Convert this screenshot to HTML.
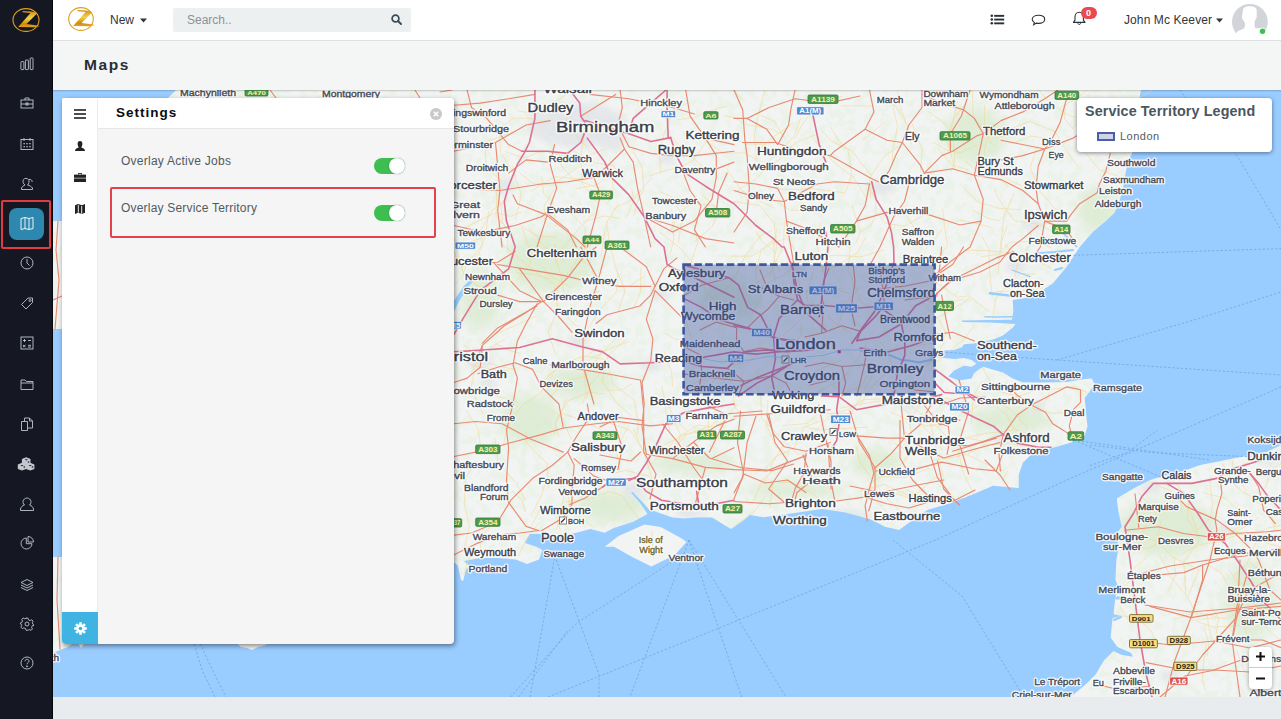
<!DOCTYPE html>
<html><head><meta charset="utf-8">
<style>
*{box-sizing:border-box}
html,body{margin:0;padding:0}
body{width:1281px;height:719px;overflow:hidden;position:relative;background:#e9ecef;font-family:"Liberation Sans",sans-serif}
.abs{position:absolute}
#sidebar{left:0;top:0;width:53px;height:719px;background:#151823;border-right:1px solid #06080f}
#header{left:53px;top:0;width:1228px;height:41px;background:#fff;border-bottom:1px solid #dfe1e1}
#titlebar{left:53px;top:41px;width:1228px;height:49px;background:#f4f5f5}
#map{left:53px;top:90px;width:1228px;height:607px;overflow:hidden;background:#f1f3ef}
#mapshade{left:53px;top:90px;width:1228px;height:2px;background:linear-gradient(rgba(0,0,0,.2),rgba(0,0,0,0))}
#footer{left:53px;top:697px;width:1228px;height:22px;background:#e8ecef}
#panel{left:62px;top:98px;width:392px;height:546px;background:#f5f5f5;border-radius:4px;box-shadow:1px 2px 5px rgba(0,0,0,.45);overflow:hidden}
#legend{left:1077px;top:98px;width:195px;height:54px;background:#fff;border-radius:4px;box-shadow:0 1px 4px rgba(0,0,0,.45)}
#zoom{left:1249px;top:647px;width:23px;height:42px;background:#fff;border-radius:4px;box-shadow:0 1px 4px rgba(0,0,0,.35)}
.t{position:absolute;white-space:nowrap;line-height:1}
svg{position:absolute;overflow:visible}
</style></head>
<body>
<div id="sidebar" class="abs"><svg style="left:11.1px;top:6.7px" width="30" height="26" viewBox="-15 -13 30 26"><defs><linearGradient id="gz2" x1="0" y1="0" x2="0" y2="1"><stop offset="0" stop-color="#d98a10"/><stop offset=".45" stop-color="#f0d448"/><stop offset=".8" stop-color="#d08a0c"/><stop offset="1" stop-color="#e3a21c"/></linearGradient></defs><ellipse cx="0" cy="0" rx="13" ry="11.4" fill="none" stroke="#dca21e" stroke-width="1.1"/><path d="M-3.6 -9 L5 -8.6 L9.5 -7.8 L11 -6.6 L0.5 4 L8 5 L14 6.1 L8 7.2 L-7.8 7.1 L4.5 -6.9 L-3.2 -7.8 Z" fill="url(#gz2)"/></svg><div class="abs" style="left:1px;top:200px;width:50px;height:49px;border:2px solid #e23b3f;border-radius:2px"></div><div class="abs" style="left:9px;top:208px;width:35px;height:32px;background:#2e87ae;border-radius:8px"></div><svg style="left:20px;top:217px" width="14" height="13" viewBox="0 0 14 13" fill="none" stroke="#fff" stroke-width=".9"><path d="M1 1.5l4-1 4 1 4-1v11l-4 1-4-1-4 1z"/><path d="M5 .5v11M9 1.5v11"/></svg><svg style="left:19.5px;top:56.5px" width="14" height="14" viewBox="0 0 14 14" fill="none" stroke="#c0c4cc" stroke-width=".9"><rect x="0.9" y="4.6" width="3" height="8" rx=".6"/><rect x="5.4" y="3" width="3" height="9.6" rx=".6"/><rect x="10.2" y="1" width="2.8" height="11.6" rx=".6"/></svg><svg style="left:19.5px;top:96.0px" width="14" height="14" viewBox="0 0 14 14" fill="none" stroke="#c0c4cc" stroke-width=".9"><rect x="1" y="4" width="12" height="8"/><path d="M5 4V2h4v2M1 8h12"/><rect x="6" y="7" width="2" height="2"/></svg><svg style="left:19.5px;top:136.5px" width="14" height="14" viewBox="0 0 14 14" fill="none" stroke="#c0c4cc" stroke-width=".9"><rect x="1" y="2.5" width="12" height="10"/><path d="M4 1v3M10 1v3"/><g fill="#c3c7cf" stroke="none"><rect x="3.5" y="6" width="1.3" height="1.3"/><rect x="6.4" y="6" width="1.3" height="1.3"/><rect x="9.3" y="6" width="1.3" height="1.3"/><rect x="3.5" y="9" width="1.3" height="1.3"/><rect x="6.4" y="9" width="1.3" height="1.3"/><rect x="9.3" y="9" width="1.3" height="1.3"/></g></svg><svg style="left:19.5px;top:176.5px" width="14" height="14" viewBox="0 0 14 14" fill="none" stroke="#c0c4cc" stroke-width=".9"><path d="M5 8c-2-1-2.5-4-1.5-5.5S7.5 1 8.5 2.5 9 7 7.5 8c2 .5 4 1.5 5 3v1.5H1.5V11c.8-1.5 2-2.5 3.5-3z"/><path d="M9 2.5c1.5-.5 3.2.5 3.2 2.5"/></svg><svg style="left:19.5px;top:256.0px" width="14" height="14" viewBox="0 0 14 14" fill="none" stroke="#c0c4cc" stroke-width=".9"><circle cx="7" cy="7" r="6"/><path d="M7 3v4l2.5 2.5"/></svg><svg style="left:19.5px;top:296.0px" width="14" height="14" viewBox="0 0 14 14" fill="none" stroke="#c0c4cc" stroke-width=".9"><path d="M1.5 8.5L8 2h4.5v4.5L6 13z"/><circle cx="10" cy="4.5" r="1"/></svg><svg style="left:19.5px;top:336.0px" width="14" height="14" viewBox="0 0 14 14" fill="none" stroke="#c0c4cc" stroke-width=".9"><rect x="1" y="1" width="12" height="12"/><path d="M3 4.5h3M4.5 3v3M8 4.5h3M3 9l2.5 2M5.5 9L3 11M8 9.3h3M8 11h3"/></svg><svg style="left:19.5px;top:376.5px" width="14" height="14" viewBox="0 0 14 14" fill="none" stroke="#c0c4cc" stroke-width=".9"><path d="M1 3h4l1.5 1.5H13v8H1z"/><path d="M1 6h12"/></svg><svg style="left:19.5px;top:416.5px" width="14" height="14" viewBox="0 0 14 14" fill="none" stroke="#c0c4cc" stroke-width=".9"><path d="M1.5 4.5h6v9h-6z"/><path d="M4.5 4.5V1h5l3 3v7h-5"/><path d="M9.5 1v3h3"/></svg><svg style="left:19.5px;top:496.5px" width="14" height="14" viewBox="0 0 14 14" fill="none" stroke="#c0c4cc" stroke-width=".9"><path d="M4.5 8c-1.5-1-2-3.5-1-5S6 1 7 1s2.5.5 3.5 2 .5 4-1 5c2 .5 3.5 2 4 4v1.5H.5V12c.5-2 2-3.5 4-4z"/></svg><svg style="left:19.5px;top:536.0px" width="14" height="14" viewBox="0 0 14 14" fill="none" stroke="#c0c4cc" stroke-width=".9"><path d="M6.3 2a5.5 5.5 0 1 0 5.7 5.7H6.3z"/><path d="M8 .5v5.5h5.5A5.5 5.5 0 0 0 8 .5z"/></svg><svg style="left:19.5px;top:577.5px" width="14" height="14" viewBox="0 0 14 14" fill="none" stroke="#c0c4cc" stroke-width=".9"><path d="M7 1.5l6 3-6 3-6-3z"/><path d="M1 7l6 3 6-3M1 9.5l6 3 6-3"/></svg><svg style="left:19.5px;top:616.5px" width="14" height="14" viewBox="0 0 14 14" fill="none" stroke="#c0c4cc" stroke-width=".9"><circle cx="7" cy="7" r="2"/><path d="M6 1h2l.5 1.7 1.6.7 1.6-.8 1.4 1.4-.8 1.6.7 1.6L14 8v.1l-1.7.5-.7 1.6.8 1.6-1.4 1.4-1.6-.8-1.6.7L7.3 13H6l-.5-1.7-1.6-.7-1.6.8-1.4-1.4.8-1.6-.7-1.6L.1 6.1v-.2l1.7-.5.7-1.6-.8-1.6 1.4-1.4 1.6.8 1.6-.7z" transform="translate(0,.2)"/></svg><svg style="left:19.5px;top:655.5px" width="14" height="14" viewBox="0 0 14 14" fill="none" stroke="#c0c4cc" stroke-width=".9"><circle cx="7" cy="7" r="6"/><path d="M5 5.3c0-1.3 1-2 2-2s2 .7 2 1.8c0 1.5-2 1.5-2 3.2"/><circle cx="7" cy="10.3" r=".5" fill="#c3c7cf"/></svg><svg style="left:17px;top:457px" width="18" height="13" viewBox="0 0 18 13"><g fill="#c4c7ce"><path d="M9.2 .3l4.3 1.6v4.6L9.2 8 4.9 6.5V1.9z"/><path d="M5 5.8l4.2 1.6v4.6L5 13.4.8 12V7.4z"/><path d="M13.2 5.8l4.2 1.6v4.6l-4.2 1.4L9 12V7.4z"/></g><g fill="#151823"><path d="M7.6 2.2h3.4L9.3 3.6z"/><path d="M3.4 7.9h3.2L5 9.3z"/><path d="M11.6 7.9h3.2L13.2 9.3z"/><circle cx="11.5" cy="5" r=".8"/><circle cx="7.3" cy="10" r=".8"/><circle cx="15.5" cy="10" r=".8"/></g></svg></div>
<div id="header" class="abs">
<svg style="left:12.5px;top:6.25px" width="30" height="26" viewBox="-15 -13 30 26"><defs><linearGradient id="gz1" x1="0" y1="0" x2="0" y2="1"><stop offset="0" stop-color="#d98a10"/><stop offset=".45" stop-color="#f0d448"/><stop offset=".8" stop-color="#d08a0c"/><stop offset="1" stop-color="#e3a21c"/></linearGradient></defs><ellipse cx="0" cy="0" rx="12.3" ry="11.4" fill="none" stroke="#dca21e" stroke-width="1.1"/><path d="M-3.6 -9 L5 -8.6 L9.5 -7.8 L11 -6.6 L0.5 4 L8 5 L14 6.1 L8 7.2 L-7.8 7.1 L4.5 -6.9 L-3.2 -7.8 Z" fill="url(#gz1)"/></svg>
<div class="t" style="left:57px;top:13.7px;font-size:12px;color:#2f353b">New</div>
<svg style="left:87px;top:18px" width="8" height="5"><path d="M0 0.5h7l-3.5 4z" fill="#2f353b"/></svg>
<div class="abs" style="left:120px;top:8px;width:238px;height:24px;background:#edf0f1;border-radius:2px"></div>
<div class="t" style="left:134px;top:14.3px;font-size:12px;color:#8c9196">Search..</div>
<svg style="left:338px;top:14px" width="11" height="11" viewBox="0 0 11 11"><circle cx="4.5" cy="4.5" r="3.4" fill="none" stroke="#3d4a55" stroke-width="1.7"/><path d="M7 7l3 3" stroke="#3d4a55" stroke-width="2" stroke-linecap="round"/></svg>
<svg style="left:937px;top:14px" width="16" height="13" viewBox="0 0 16 13"><g fill="#2b3038"><circle cx="1.8" cy="1.8" r="1.3"/><circle cx="1.8" cy="5.5" r="1.3"/><circle cx="1.8" cy="9.3" r="1.3"/><rect x="4.2" y="0.9" width="10" height="1.9"/><rect x="4.2" y="4.6" width="10" height="1.9"/><rect x="4.2" y="8.4" width="10" height="1.9"/></g></svg>
<svg style="left:978px;top:14px" width="16" height="13" viewBox="0 0 16 13"><path d="M7.5 1.2c3.6 0 6.2 1.7 6.2 4.1s-2.6 4.1-6.2 4.1c-.8 0-1.5-.1-2.2-.3L2.7 10.8l.6-2.2C1.9 7.8 1.2 6.6 1.2 5.3 1.2 2.9 3.9 1.2 7.5 1.2z" fill="none" stroke="#2b3038" stroke-width="1.1"/></svg>
<svg style="left:1019px;top:11px" width="15" height="15" viewBox="0 0 15 15"><path d="M7.2 1.3c-2.6 0-4.2 2-4.2 4.6v3.2L1.4 11.4h11.6l-1.6-2.3V5.9c0-2.6-1.6-4.6-4.2-4.6z" fill="none" stroke="#2b3038" stroke-width="1.1" stroke-linejoin="round"/><path d="M5.8 12.3a1.5 1.5 0 0 0 2.9 0" fill="none" stroke="#2b3038" stroke-width="1"/></svg>
<div class="abs" style="left:1028px;top:7px;width:16px;height:12px;border-radius:6px;background:#ea4a4f"></div>
<div class="t" style="left:1033px;top:9px;font-size:9px;font-weight:700;color:#fff">0</div>
<div class="t" style="left:1071px;top:13.8px;font-size:12px;color:#2f353b;letter-spacing:.1px">John Mc Keever</div>
<svg style="left:1163px;top:18px" width="8" height="5"><path d="M0 0.5h7l-3.5 4z" fill="#2f353b"/></svg>
<svg style="left:1178px;top:3px" width="38" height="37" viewBox="0 0 38 37"><circle cx="18.9" cy="18.9" r="17.9" fill="#d1d4d8"/><path d="M11.9 7.6C12 4.5 15 3.3 18.8 3.3S25.7 4.5 25.7 7.6L25.7 14.4C24 17 23.3 19 23.5 21.3C23.6 23.5 24.6 25.5 24.6 25.5L33 24.5L38 37L0 37L6.6 28.2L13 25.5C14 23 14.2 21.5 14 20.8C13.5 18 11 16 10.9 14.4Z" fill="#fff"/><circle cx="31.5" cy="28.2" r="2.7" fill="#3cc04f"/></svg>
</div>
<div id="titlebar" class="abs"><div class="t" style="left:31px;top:57px;font-size:15.5px;font-weight:700;color:#272d36;letter-spacing:1.6px;margin-top:-41px">Maps</div></div>
<div id="map" class="abs"><svg style="left:0;top:0" width="1228" height="607" viewBox="53 90 1228 607"><defs><filter id="gn" x="0" y="0" width="100%" height="100%" color-interpolation-filters="sRGB"><feTurbulence type="fractalNoise" baseFrequency="0.11" numOctaves="3" seed="5"/><feColorMatrix type="matrix" values="0 0 0 0 0.86  0 0 0 0 0.93  0 0 0 0 0.82  0 0 0 -6 3.3"/></filter><filter id="ub"><feGaussianBlur stdDeviation="3"/></filter><filter id="gb" x="-50%" y="-50%" width="200%" height="200%"><feGaussianBlur stdDeviation="6"/></filter></defs>
<rect x="53" y="90" width="1228" height="607" fill="#f2f4f3"/>
<rect x="53" y="90" width="1228" height="607" filter="url(#gn)" opacity=".28"/>
<g fill="#d9eacd" filter="url(#gb)" opacity=".75"><ellipse cx="975" cy="136" rx="30" ry="28"/><ellipse cx="1098" cy="210" rx="20" ry="22"/><ellipse cx="611" cy="506" rx="35" ry="16"/><ellipse cx="692" cy="463" rx="42" ry="10"/><ellipse cx="795" cy="490" rx="50" ry="8"/><ellipse cx="875" cy="463" rx="25" ry="14"/><ellipse cx="730" cy="300" rx="30" ry="20"/><ellipse cx="550" cy="262" rx="45" ry="30"/><ellipse cx="1166" cy="528" rx="48" ry="28"/><ellipse cx="645" cy="545" rx="22" ry="10"/><ellipse cx="1010" cy="420" rx="40" ry="14"/><ellipse cx="580" cy="382" rx="35" ry="16"/><ellipse cx="480" cy="300" rx="20" ry="30"/><ellipse cx="1250" cy="600" rx="25" ry="40"/><ellipse cx="530" cy="420" rx="30" ry="25"/></g>
<g fill="#e2e4e8" filter="url(#ub)" opacity=".8"><ellipse cx="577" cy="125" rx="50" ry="22"/><ellipse cx="612" cy="140" rx="14" ry="10"/><ellipse cx="505" cy="186" rx="10" ry="8"/><ellipse cx="667" cy="158" rx="9" ry="7"/><ellipse cx="882" cy="187" rx="12" ry="8"/><ellipse cx="1033" cy="225" rx="10" ry="7"/><ellipse cx="1016" cy="266" rx="10" ry="7"/><ellipse cx="480" cy="360" rx="14" ry="9"/><ellipse cx="488" cy="382" rx="8" ry="6"/><ellipse cx="578" cy="340" rx="10" ry="8"/><ellipse cx="651" cy="365" rx="10" ry="7"/><ellipse cx="660" cy="293" rx="9" ry="7"/><ellipse cx="796" cy="268" rx="10" ry="7"/><ellipse cx="842" cy="515" rx="30" ry="5"/><ellipse cx="690" cy="512" rx="14" ry="6"/><ellipse cx="633" cy="490" rx="10" ry="8"/><ellipse cx="540" cy="540" rx="12" ry="6"/><ellipse cx="1150" cy="488" rx="10" ry="6"/><ellipse cx="1270" cy="458" rx="14" ry="7"/><ellipse cx="1128" cy="540" rx="8" ry="7"/><ellipse cx="1225" cy="528" rx="8" ry="6"/><ellipse cx="1002" cy="440" rx="8" ry="6"/><ellipse cx="1036" cy="407" rx="8" ry="6"/><ellipse cx="910" cy="405" rx="10" ry="6"/><ellipse cx="1170" cy="676" rx="10" ry="6"/></g>
<polygon points="53.0,697.0 53.0,653.0 60.0,650.0 68.0,647.0 73.0,643.0 100.0,630.0 300.0,615.0 420.0,590.0 454.0,562.0 458.0,566.0 461.0,580.0 463.0,581.0 466.0,570.0 469.0,566.0 464.0,561.0 480.0,558.0 497.0,558.0 515.6,559.6 527.0,564.0 539.0,559.6 542.5,550.0 536.6,546.7 525.0,543.0 529.6,534.0 543.7,534.0 548.0,538.5 576.5,532.7 590.5,529.0 604.6,532.7 614.0,528.0 632.7,522.0 647.5,514.0 640.0,503.0 631.0,492.5 632.5,492.0 641.5,501.0 650.0,510.5 653.7,511.0 672.5,517.5 684.0,518.6 696.0,517.5 712.0,517.5 731.0,529.0 742.7,521.0 750.0,515.0 763.4,517.3 798.5,512.6 822.0,509.0 845.4,512.6 871.0,519.6 885.0,526.7 899.0,530.0 908.6,523.0 927.4,510.0 950.8,503.0 974.0,494.0 993.0,485.7 1018.7,488.0 1018.7,475.0 1022.9,462.7 1030.0,455.7 1038.4,451.5 1049.6,448.7 1059.4,445.9 1073.5,441.7 1084.7,436.0 1087.5,426.2 1086.0,412.2 1084.7,398.1 1089.0,392.5 1094.6,384.0 1091.7,378.4 1084.7,379.1 1066.5,382.0 1038.4,382.6 1022.4,382.3 1012.6,378.4 1003.0,372.6 993.2,369.7 983.4,366.7 979.5,368.7 973.7,373.6 971.7,378.4 959.0,380.4 948.4,376.5 954.2,370.6 964.0,365.8 971.7,366.7 976.6,363.8 971.7,360.0 964.0,358.0 954.2,359.0 934.7,357.0 932.0,361.0 918.7,363.5 910.0,361.7 901.5,361.0 888.6,355.7 870.0,353.0 860.0,351.5 860.0,350.0 870.0,351.5 888.6,353.7 901.5,358.9 910.0,359.7 918.7,361.5 930.0,359.0 932.0,354.0 934.7,351.0 944.5,350.5 954.2,350.0 962.0,347.3 964.0,344.3 973.7,343.4 979.5,342.4 993.2,339.5 1003.0,335.6 1012.6,327.8 1015.6,323.9 990.0,322.5 962.0,322.0 962.0,320.5 990.0,320.0 1012.0,319.7 1013.4,311.0 1012.7,300.0 1033.0,296.7 1053.0,283.3 1066.7,266.7 1079.7,247.0 1092.8,232.1 1106.0,221.1 1114.7,212.4 1120.0,199.3 1123.4,186.2 1125.6,173.0 1127.8,162.0 1132.0,153.4 1137.0,130.0 1139.8,96.6 1140.9,90.0 1281.0,90.0 1281.0,445.0 1267.0,451.7 1241.9,456.7 1216.9,461.7 1200.2,465.0 1183.5,470.9 1166.8,475.0 1150.0,480.0 1133.4,488.4 1116.7,498.4 1118.4,511.8 1121.7,526.8 1116.7,533.5 1118.4,548.5 1116.4,560.0 1115.4,579.3 1117.4,585.0 1114.5,604.5 1113.5,614.2 1121.2,616.0 1112.5,618.0 1110.6,637.4 1117.4,647.0 1131.0,652.8 1132.8,656.7 1121.2,654.8 1113.5,651.0 1103.8,660.6 1096.0,674.1 1086.4,683.8 1074.8,693.5 1069.0,697.3 1069.0,697.0" fill="#99ccff"/>
<polygon points="53.0,90.0 176.0,90.0 168.0,98.0 62.0,98.0 62.0,221.0 53.0,221.0" fill="#99ccff"/>
<polygon points="53.0,329.0 62.0,329.0 62.0,557.0 53.0,557.0" fill="#99ccff"/>
<polygon points="454.0,311.0 461.0,298.0 468.0,287.0 475.0,279.0 472.0,278.0 464.0,286.0 457.0,296.0 454.0,301.0" fill="#99ccff"/>
<polygon points="604.6,546.7 618.6,536.0 644.4,524.5 660.8,527.0 681.8,538.5 686.5,542.0 674.8,555.0 651.4,566.6 632.7,557.3 614.0,546.7" fill="#f2f4f3"/>
<polygon points="236.0,643.0 241.0,647.0 247.0,648.0 252.0,650.0 258.0,647.0 266.0,645.0 268.0,642.0" fill="#f2f4f3"/>
<polygon points="78.0,643.0 81.0,648.0 84.0,644.0" fill="#f2f4f3"/><g fill="none" stroke-linecap="round" stroke-linejoin="round">
<g stroke="#f0d992" stroke-width="0.7" opacity=".8">
<path d="M828.1 429.8 L849.7 416.4 L861.9 395.2 L871.7 376.6"/>
<path d="M608.0 361.1 L612.1 383.2 L634.1 400.0 L637.8 421.4 L637.7 434.3"/>
<path d="M466.4 410.7 L478.0 428.0 L480.2 443.7"/>
<path d="M942.7 208.6 L945.0 230.4 L947.5 245.2 L931.2 267.8"/>
<path d="M1148.9 519.6 L1144.5 529.2 L1138.4 539.5"/>
<path d="M543.2 266.6 L548.8 274.9 L571.8 287.8"/>
<path d="M782.7 134.3 L772.2 129.4 L745.3 124.5 L735.2 117.8 L723.6 115.6"/>
<path d="M600.9 429.5 L579.4 419.2 L563.4 413.9"/>
<path d="M951.9 440.2 L966.2 437.4 L981.7 441.2"/>
<path d="M699.1 134.6 L706.3 141.8 L724.1 153.3 L744.7 152.9 L755.6 159.0"/>
<path d="M773.3 470.7 L762.0 479.9 L753.1 501.4"/>
<path d="M1239.8 625.5 L1227.8 626.4 L1213.3 627.2 L1197.1 621.6"/>
<path d="M860.1 405.7 L869.4 389.6 L884.2 374.5"/>
<path d="M515.3 218.9 L519.2 204.6 L521.1 193.7 L515.5 178.0 L512.7 165.9"/>
<path d="M1264.9 488.8 L1271.9 469.4 L1287.7 459.7 L1298.8 448.8 L1299.8 428.0"/>
<path d="M515.9 130.8 L505.4 135.1 L483.3 142.3"/>
<path d="M1198.5 537.4 L1187.2 518.1 L1190.1 492.6"/>
<path d="M935.9 459.6 L950.4 458.0 L965.9 454.1 L986.1 463.9 L1003.1 470.7"/>
<path d="M901.6 404.8 L883.6 400.2 L861.3 404.2 L840.6 408.0"/>
<path d="M463.4 272.7 L453.7 251.2 L437.0 230.3"/>
<path d="M866.1 236.6 L857.7 252.2 L835.8 267.0 L818.9 266.7"/>
<path d="M936.2 282.1 L957.5 297.2 L968.6 295.9 L988.3 310.9"/>
<path d="M547.3 376.1 L562.7 364.3 L583.9 355.8 L604.9 359.4"/>
<path d="M684.0 458.8 L678.8 444.1 L680.2 433.8 L672.2 417.5"/>
<path d="M650.3 175.5 L661.7 171.7 L682.5 166.1 L692.6 160.9 L706.9 140.6"/>
<path d="M1030.7 405.9 L1010.0 393.2 L1005.8 382.5"/>
<path d="M1225.3 528.5 L1249.8 536.9 L1267.7 528.1 L1286.3 524.1"/>
<path d="M556.1 237.1 L536.5 235.6 L523.0 227.5"/>
<path d="M1206.6 609.5 L1208.5 625.5 L1212.2 640.0"/>
<path d="M483.0 413.6 L471.0 388.3 L474.7 369.4"/>
<path d="M817.4 429.2 L830.4 414.7 L849.6 409.0 L863.6 399.6 L889.8 398.6"/>
<path d="M927.9 212.0 L913.7 221.0 L904.3 226.2 L884.7 223.0 L877.6 213.1"/>
<path d="M531.1 191.2 L554.0 176.5 L568.7 178.0 L581.0 178.8"/>
<path d="M716.3 206.2 L692.6 202.7 L681.6 210.5 L670.5 229.9"/>
<path d="M720.4 305.7 L705.4 291.7 L700.0 271.2"/>
<path d="M963.3 416.7 L979.0 405.1 L1000.0 403.6 L1012.4 410.4 L1028.0 429.4"/>
<path d="M651.9 531.0 L653.1 557.9"/>
<path d="M619.9 471.2 L616.1 449.2 L629.0 425.0"/>
<path d="M549.4 396.9 L568.2 380.4 L586.4 376.0 L599.2 356.1 L617.2 336.9"/>
<path d="M852.0 205.1 L860.4 231.6 L856.0 242.5"/>
<path d="M724.3 373.4 L708.7 379.5 L698.1 381.1 L684.1 391.4"/>
<path d="M751.4 314.7 L761.3 298.3 L755.3 272.9 L761.0 250.9 L776.7 236.5"/>
<path d="M788.5 454.0 L775.8 446.8 L766.7 425.2 L767.9 400.5"/>
<path d="M1181.6 511.7 L1180.7 488.8 L1169.9 476.7"/>
<path d="M841.7 96.4 L831.2 99.3 L809.1 115.3 L801.0 126.5 L794.9 138.4"/>
<path d="M517.5 402.4 L494.9 395.3 L490.0 386.1"/>
<path d="M666.2 333.7 L674.9 339.1 L689.7 341.6"/>
<path d="M735.9 418.1 L710.4 429.5 L686.3 434.4 L673.1 450.3 L663.4 455.2"/>
<path d="M844.1 192.7 L826.6 190.4 L811.5 188.7 L795.9 189.4 L777.2 189.3"/>
<path d="M938.5 474.2 L919.3 492.0 L909.1 495.8 L884.5 484.5 L859.1 491.1"/>
<path d="M809.2 379.9 L816.6 370.7 L840.9 360.5"/>
<path d="M495.7 343.2 L506.8 349.5 L518.8 353.1"/>
<path d="M798.8 454.8 L781.2 438.5 L761.7 418.5 L760.6 395.3 L755.1 384.6"/>
<path d="M1192.3 566.1 L1173.1 557.4 L1157.2 541.5 L1142.8 537.2"/>
<path d="M869.3 486.3 L879.0 491.6 L896.6 493.9 L907.8 497.6 L918.2 502.0"/>
<path d="M525.5 500.5 L516.8 483.9 L506.2 471.8 L498.0 462.5 L494.8 438.3"/>
<path d="M1147.0 556.7 L1128.8 573.3"/>
<path d="M759.4 148.9 L772.8 137.2 L793.1 123.2"/>
<path d="M461.7 278.3 L466.8 263.7 L481.3 246.5 L485.7 234.7 L488.6 211.8"/>
<path d="M757.0 161.3 L754.3 135.2 L757.2 120.4 L763.9 93.4 L766.3 79.6"/>
<path d="M1254.3 533.0 L1237.9 535.0 L1221.7 540.6"/>
<path d="M774.5 208.3 L752.1 197.1 L741.0 190.0 L726.6 168.5"/>
<path d="M686.8 103.5 L672.9 110.1 L664.1 133.7 L659.4 153.6 L660.9 173.4"/>
<path d="M730.6 256.1 L752.1 256.1 L771.8 243.4 L785.4 238.7"/>
<path d="M1254.8 498.1 L1244.6 493.2 L1235.9 486.8 L1222.0 462.8"/>
<path d="M766.6 144.2 L747.2 144.1 L724.1 136.0 L706.9 132.3 L685.0 140.4"/>
<path d="M592.7 214.0 L575.2 233.3 L560.4 251.1 L555.7 263.0"/>
<path d="M1214.6 643.7 L1218.7 617.6 L1212.0 607.7"/>
<path d="M606.6 221.9 L609.2 240.9 L615.2 266.3 L625.1 290.8 L618.5 311.0"/>
<path d="M784.3 222.0 L783.5 246.3 L772.5 267.8 L778.6 293.7"/>
<path d="M1191.8 620.5 L1214.5 617.8 L1227.3 618.4 L1241.2 610.9"/>
<path d="M880.8 476.6 L891.8 476.4 L904.9 477.7 L929.6 468.0"/>
<path d="M577.2 167.9 L567.5 174.4 L552.4 185.1 L532.0 182.8 L520.0 173.0"/>
<path d="M903.4 409.1 L916.6 420.2 L936.4 439.9 L941.9 449.7"/>
<path d="M515.5 175.3 L500.5 152.4 L499.4 130.6 L487.0 119.3 L480.2 106.8"/>
<path d="M920.5 368.1 L939.9 359.8 L952.3 348.5 L964.3 338.9 L974.4 325.2"/>
<path d="M1005.4 245.7 L1017.9 254.9 L1035.7 259.8 L1051.6 268.3"/>
<path d="M968.2 169.8 L951.7 164.6 L938.0 149.1"/>
<path d="M528.5 227.5 L543.7 246.0 L563.8 260.5"/>
<path d="M623.9 179.8 L613.5 165.8 L596.5 163.1 L571.9 150.4"/>
<path d="M957.3 101.3 L953.8 118.8 L949.8 132.0 L949.5 147.2"/>
<path d="M538.9 523.1 L526.6 538.6 L518.6 555.9"/>
<path d="M972.6 210.1 L988.1 218.3 L999.5 220.9"/>
<path d="M1057.5 234.8 L1040.2 224.6 L1014.2 220.6 L999.7 200.6 L994.2 189.6"/>
<path d="M607.5 422.5 L630.3 430.2 L645.1 454.0"/>
<path d="M1154.8 640.2 L1151.1 630.6 L1137.4 618.3 L1120.6 615.6"/>
<path d="M883.9 250.0 L860.7 256.9 L836.6 255.2 L817.7 256.9"/>
<path d="M538.8 299.7 L553.6 290.7 L569.9 270.4 L585.1 249.0 L604.9 233.9"/>
<path d="M551.1 159.6 L567.8 153.6 L582.9 158.3 L604.0 149.1"/>
<path d="M1198.4 534.3 L1189.7 510.1 L1172.4 491.7 L1148.7 481.6"/>
<path d="M904.7 488.7 L925.8 498.2"/>
<path d="M905.7 432.3 L908.6 452.3 L902.9 462.6 L892.9 469.6 L869.6 483.6"/>
<path d="M454.5 238.1 L458.3 255.6 L464.0 274.3 L481.2 288.8"/>
<path d="M644.9 275.9 L629.1 286.4 L601.7 283.6 L588.0 282.8"/>
<path d="M844.7 194.3 L851.8 174.2 L847.8 148.6 L838.7 141.0 L831.0 127.4"/>
<path d="M1198.6 617.8 L1185.6 593.9 L1184.7 576.4"/>
<path d="M553.8 509.5 L560.4 530.5"/>
<path d="M941.8 229.0 L933.5 241.5 L925.1 249.5"/>
<path d="M890.9 412.2 L908.8 420.3 L928.2 426.3 L955.2 419.8 L965.0 410.9"/>
<path d="M1061.2 107.5 L1070.3 102.1 L1089.7 88.8"/>
<path d="M867.4 199.2 L859.0 185.9 L853.1 177.1 L833.3 162.1 L815.2 141.0"/>
<path d="M1069.6 412.7 L1051.8 413.3 L1032.5 408.6"/>
<path d="M1050.7 247.6 L1037.5 241.3 L1010.0 242.2 L996.8 254.6 L981.1 256.8"/>
<path d="M957.1 459.4 L960.8 445.2 L968.4 436.8 L988.3 433.1 L1012.4 430.4"/>
<path d="M650.8 178.8 L634.9 197.8 L613.7 209.1"/>
<path d="M1086.9 392.5 L1073.6 386.6 L1051.3 389.4"/>
<path d="M504.6 339.3 L481.0 352.9 L470.7 374.2"/>
<path d="M950.8 171.7 L954.6 161.6 L953.1 135.7 L943.0 121.9 L928.6 111.7"/>
<path d="M517.3 110.8 L532.4 113.2 L555.2 102.0 L564.8 95.6 L573.0 82.4"/>
<path d="M1236.7 650.4 L1244.2 670.7 L1258.3 678.6"/>
<path d="M836.6 328.5 L840.7 318.4 L844.4 304.5 L860.7 286.2"/>
<path d="M851.1 332.9 L835.0 323.2 L825.3 314.1 L810.6 301.0"/>
<path d="M800.7 118.6 L793.8 136.7 L780.8 150.8 L764.4 165.1"/>
<path d="M633.9 152.8 L642.0 167.1 L644.0 190.1 L638.5 198.8 L633.8 215.1"/>
<path d="M883.5 123.3 L873.1 131.8 L863.4 139.4"/>
<path d="M626.4 339.3 L609.3 354.2 L598.9 374.8 L590.4 384.1 L586.4 398.7"/>
<path d="M640.9 267.3 L640.4 292.6 L632.8 309.6"/>
<path d="M463.4 552.3 L469.4 526.5 L464.4 504.6 L465.5 477.5 L473.9 466.0"/>
<path d="M977.1 144.6 L960.3 153.0 L945.5 149.7 L933.6 142.4"/>
<path d="M1043.1 405.9 L1051.0 389.1"/>
<path d="M1206.3 643.8 L1203.6 664.2 L1202.3 680.0 L1205.5 689.9"/>
<path d="M921.8 249.0 L917.1 232.7 L903.6 210.3"/>
<path d="M479.7 519.3 L479.8 540.5 L482.4 557.8"/>
<path d="M566.3 397.8 L563.0 407.6 L556.0 420.7 L554.5 434.6"/>
<path d="M1086.9 138.0 L1101.9 132.4 L1123.2 117.6 L1137.4 99.6 L1156.0 87.2"/>
<path d="M1251.2 590.4 L1257.6 614.0 L1267.4 628.5 L1283.3 643.7 L1299.0 658.6"/>
<path d="M1212.7 537.7 L1237.8 531.0 L1259.1 517.4"/>
<path d="M877.7 502.3 L894.8 521.4"/>
<path d="M724.3 292.6 L735.5 275.8 L745.5 255.4 L760.6 235.6 L771.8 230.4"/>
<path d="M765.7 496.3 L754.7 511.1 L735.0 525.3"/>
<path d="M678.2 243.0 L682.7 215.5 L670.7 196.2 L660.7 191.9"/>
<path d="M727.0 106.1 L716.1 109.0 L692.1 117.9 L678.1 119.6"/>
<path d="M571.4 439.9 L562.0 417.4 L551.2 409.9"/>
<path d="M661.9 386.4 L664.8 400.9 L666.2 415.8 L670.1 431.1"/>
<path d="M521.0 212.1 L510.7 216.4 L495.5 212.8 L483.5 218.4 L458.6 231.0"/>
<path d="M854.5 341.6 L860.5 329.2 L875.3 309.1 L878.5 296.1"/>
<path d="M694.5 241.5 L712.3 226.8 L716.0 217.0 L713.9 205.0 L701.6 194.2"/>
<path d="M879.3 96.4 L896.0 106.3 L908.4 127.2 L911.2 144.2"/>
<path d="M1118.1 592.4 L1131.7 579.5 L1148.6 575.7"/>
<path d="M759.4 488.8 L769.4 473.7 L772.6 462.9 L783.0 445.1"/>
<path d="M672.8 219.7 L673.8 239.5 L670.7 252.3"/>
<path d="M541.5 176.8 L543.8 193.8 L552.6 201.5 L555.9 226.4"/>
<path d="M1083.8 102.6 L1084.6 114.6 L1073.0 128.0"/>
<path d="M601.1 255.9 L604.7 232.2 L606.7 222.2 L618.3 203.7"/>
<path d="M963.8 299.2 L945.0 302.5 L933.0 303.3 L913.0 293.1 L892.8 284.5"/>
<path d="M800.8 323.5 L801.5 334.2 L790.2 350.2 L782.5 363.2 L784.6 374.0"/>
<path d="M722.6 415.9 L710.6 426.0 L684.2 434.8 L661.4 446.5"/>
<path d="M860.1 232.1 L870.9 225.6 L875.7 214.8 L875.9 200.1 L870.9 190.6"/>
<path d="M737.2 404.2 L721.1 424.1 L718.3 438.9"/>
<path d="M986.3 134.6 L979.8 125.5 L973.3 116.6 L972.3 89.1"/>
<path d="M692.6 342.5 L686.5 322.3 L690.4 311.7"/>
<path d="M1055.8 209.6 L1039.7 190.9 L1030.2 167.5 L1037.2 146.8"/>
<path d="M626.5 217.2 L633.9 200.4 L631.7 188.5"/>
<path d="M1232.2 460.3 L1233.5 471.5 L1246.1 490.6"/>
<path d="M1173.9 557.3 L1175.7 574.8 L1168.8 590.7"/>
<path d="M831.8 397.4 L848.3 391.5 L859.6 387.3 L874.4 366.2"/>
<path d="M990.2 227.0 L970.0 221.9 L959.0 220.0"/>
<path d="M800.6 260.7 L783.4 275.3 L770.3 281.3 L759.9 287.9"/>
<path d="M801.9 297.3 L797.7 275.9 L794.1 262.6 L796.2 252.5 L785.4 235.0"/>
<path d="M1128.6 620.0 L1119.7 606.0"/>
<path d="M509.0 370.6 L489.8 369.2 L471.2 365.3 L456.9 352.4 L432.7 350.3"/>
<path d="M1203.4 492.7 L1215.1 495.7 L1225.2 497.8 L1244.4 516.7"/>
<path d="M744.4 415.3 L735.1 408.2 L732.7 388.2"/>
<path d="M510.0 234.4 L502.3 221.2 L501.1 206.8 L498.6 196.1 L487.3 181.9"/>
<path d="M915.6 368.8 L932.8 360.7 L943.5 343.6"/>
<path d="M597.6 465.1 L612.8 473.7 L625.1 470.3 L647.7 475.8 L658.4 482.8"/>
<path d="M893.2 107.3 L897.5 126.6 L892.7 150.1 L892.3 165.5"/>
<path d="M631.5 415.8 L617.3 403.5 L602.4 382.2 L604.5 362.1"/>
<path d="M780.2 271.7 L774.5 261.7 L773.7 244.8 L776.7 229.1"/>
<path d="M550.6 278.9 L531.3 274.2 L517.3 273.0"/>
<path d="M536.0 315.8 L518.6 324.1 L497.2 333.2 L480.2 344.9"/>
<path d="M540.8 507.4 L531.6 526.0"/>
<path d="M957.8 447.8 L962.6 471.0 L973.6 493.8"/>
<path d="M1016.3 141.9 L1030.9 136.1 L1054.9 139.4 L1065.2 143.3"/>
<path d="M1085.5 119.1 L1069.7 115.8 L1051.7 104.7 L1042.6 94.4 L1027.6 74.6"/>
<path d="M850.3 293.6 L839.2 290.6 L828.6 284.0"/>
<path d="M1196.1 531.7 L1210.3 517.9 L1212.6 506.0 L1209.3 479.0"/>
<path d="M628.6 341.8 L614.5 346.5 L591.2 358.4"/>
<path d="M1035.3 390.1 L1018.0 397.0 L993.7 404.5 L978.0 402.4"/>
<path d="M992.7 318.8 L995.8 298.7 L1006.5 286.2 L1020.3 273.7 L1036.2 274.2"/>
<path d="M1030.8 231.8 L1031.5 242.6 L1017.7 262.7 L1014.7 276.8"/>
<path d="M508.0 199.1 L492.6 209.9 L480.7 230.2 L482.4 245.6 L477.8 255.2"/>
<path d="M1031.6 434.8 L1014.4 429.4 L1006.4 415.0 L995.8 405.3"/>
<path d="M1166.2 537.7 L1148.8 548.5 L1122.2 546.3"/>
<path d="M1240.5 526.2 L1230.2 532.4 L1220.8 541.5 L1199.0 544.7 L1181.3 554.1"/>
<path d="M671.2 136.0 L679.2 145.9 L697.9 162.2 L706.6 170.9"/>
<path d="M1035.2 447.7 L1008.6 443.5 L984.5 445.0 L968.5 453.5"/>
<path d="M922.1 301.7 L940.2 321.7 L945.4 331.7 L943.6 343.3"/>
<path d="M1005.1 131.2 L1029.4 121.4 L1055.0 131.4 L1064.9 148.5 L1078.0 166.5"/>
<path d="M525.2 511.6 L522.2 500.2 L512.2 491.1"/>
<path d="M1027.5 107.9 L1040.9 85.4 L1042.9 71.6 L1040.1 59.2 L1036.2 33.8"/>
<path d="M582.0 349.6 L587.3 329.7 L598.4 311.8 L616.4 292.0 L617.9 272.7"/>
<path d="M1023.4 405.5 L1017.9 397.1 L994.7 389.8 L982.6 368.0"/>
<path d="M740.8 99.1 L731.4 85.3 L726.8 66.5 L716.8 47.2"/>
<path d="M620.1 218.3 L604.3 216.0 L583.3 221.8"/>
<path d="M669.2 407.3 L675.7 419.9 L687.0 431.1"/>
<path d="M568.2 496.5 L573.9 512.5 L593.4 527.0"/>
<path d="M691.4 450.1 L708.5 430.0 L708.4 419.4 L720.0 406.1"/>
<path d="M585.1 131.1 L580.5 157.4 L582.8 184.1 L596.7 202.2"/>
<path d="M566.2 501.7 L588.1 499.0 L609.9 491.5 L621.8 495.7 L638.2 518.1"/>
<path d="M555.8 285.0 L539.1 274.5 L520.5 259.8 L500.1 242.1"/>
<path d="M521.4 225.3 L530.0 250.7 L530.6 264.0 L516.8 280.5"/>
<path d="M540.7 383.6 L556.2 369.6 L574.2 366.2 L595.3 349.3 L605.7 350.3"/>
<path d="M496.9 188.8 L496.0 216.1 L507.8 229.3 L507.6 250.3 L514.2 258.4"/>
<path d="M736.8 191.0 L754.8 179.7 L768.1 166.9 L781.3 158.4"/>
<path d="M934.5 343.1 L907.6 346.8 L885.7 350.2 L859.7 349.0"/>
<path d="M713.3 426.9 L698.3 425.2 L679.0 436.6 L664.7 450.7 L645.9 469.5"/>
<path d="M879.2 320.0 L898.0 317.2 L916.6 325.2 L931.6 320.5"/>
<path d="M982.6 127.5 L998.0 136.8 L1022.2 134.0"/>
<path d="M806.5 427.0 L818.8 430.0 L840.8 428.6 L867.4 427.2"/>
<path d="M822.9 271.4 L817.6 247.6 L820.5 223.2"/>
<path d="M1207.4 656.0 L1208.7 643.2 L1204.4 628.6"/>
<path d="M776.5 244.3 L774.3 223.2 L759.4 205.6 L734.2 201.4"/>
<path d="M1234.2 477.9 L1223.9 474.9"/>
<path d="M965.3 161.4 L977.0 170.7 L998.4 174.3 L1022.5 186.4"/>
<path d="M1241.3 466.0 L1254.5 458.7 L1271.3 450.3"/>
<path d="M896.8 377.1 L887.1 352.2 L877.2 337.4"/>
<path d="M783.4 296.3 L809.8 290.4 L827.3 290.6 L841.4 288.5"/>
<path d="M554.9 352.8 L548.2 332.3 L558.0 308.0 L557.7 288.3 L571.5 274.5"/>
<path d="M501.1 181.2 L486.5 166.8 L485.2 152.0 L489.2 142.1"/>
<path d="M501.9 126.9 L513.6 118.2 L533.5 118.3 L546.4 105.2"/>
<path d="M525.9 432.3 L526.6 442.6 L538.3 455.0 L546.9 463.3 L548.9 488.5"/>
<path d="M856.5 446.8 L859.5 462.0 L874.8 482.4 L885.0 496.5 L903.5 514.8"/>
<path d="M756.5 355.2 L748.9 362.3 L728.0 365.7 L712.1 382.7"/>
<path d="M971.3 424.1 L973.2 396.6 L981.8 381.7"/>
<path d="M1239.5 488.1 L1226.8 479.4 L1218.4 471.4"/>
<path d="M919.8 327.6 L932.1 319.5 L945.0 314.1 L968.6 299.3"/>
<path d="M503.4 443.9 L509.0 424.0 L522.7 404.6 L539.9 393.7 L552.9 375.1"/>
<path d="M918.2 420.4 L937.6 426.9 L950.7 440.9"/>
<path d="M471.8 549.4 L463.7 574.8"/>
<path d="M1253.9 500.3 L1270.5 510.6 L1275.1 530.3"/>
<path d="M1081.6 135.7 L1085.1 151.9 L1099.2 169.7 L1118.5 176.4"/>
<path d="M783.0 335.6 L802.9 317.6 L808.5 305.7 L806.5 294.3 L813.2 272.0"/>
<path d="M672.7 386.9 L671.5 371.7 L664.2 351.7"/>
<path d="M753.6 285.2 L771.9 271.9 L776.7 245.8"/>
<path d="M871.9 308.0 L860.7 301.9 L855.5 286.7 L848.1 270.5 L850.7 244.1"/>
<path d="M1013.9 194.0 L1004.2 215.8 L1001.0 241.0 L999.9 252.0 L998.1 274.0"/>
<path d="M1157.0 542.5 L1160.6 522.3 L1155.7 512.7 L1137.6 491.7"/>
<path d="M505.8 151.8 L524.8 158.0 L536.5 152.9 L547.3 151.4 L560.6 155.8"/>
<path d="M471.0 241.5 L480.8 238.5 L496.0 229.9 L502.7 218.6"/>
<path d="M588.4 148.4 L570.5 129.5 L563.2 109.6"/>
<path d="M867.9 340.8 L859.2 356.5 L842.8 379.2 L820.3 390.4 L809.6 401.5"/>
<path d="M777.9 483.3 L791.3 482.0 L813.3 493.8 L829.2 509.7"/>
<path d="M782.7 425.6 L807.6 423.5 L818.0 413.5 L837.8 413.3 L853.4 413.4"/>
<path d="M576.6 326.4 L557.1 306.6 L554.1 286.2"/>
<path d="M906.1 123.9 L898.0 99.0 L897.6 85.1"/>
<path d="M823.6 419.9 L803.9 427.2 L794.1 448.0 L775.3 457.1 L765.2 469.0"/>
<path d="M606.2 204.3 L613.3 195.9 L612.3 171.5"/>
<path d="M570.2 212.5 L585.2 228.1 L584.9 252.6"/>
<path d="M1199.3 540.4 L1183.7 562.2 L1185.9 582.2"/>
<path d="M607.2 390.5 L622.1 389.7 L632.0 383.9"/>
<path d="M1007.8 471.1 L1002.5 479.8"/>
<path d="M554.9 243.8 L556.0 260.5 L560.1 272.4 L565.1 298.4"/>
<path d="M603.2 393.6 L588.9 392.2 L567.7 401.0 L555.4 423.5 L558.6 436.5"/>
<path d="M576.2 188.5 L597.5 184.7 L614.3 169.2"/>
<path d="M568.7 297.7 L582.8 298.8 L599.2 291.1"/>
<path d="M815.4 134.7 L797.2 142.2 L786.7 149.2"/>
<path d="M923.8 398.3 L909.1 421.9 L913.9 445.9 L905.4 461.4"/>
<path d="M693.6 263.6 L678.5 246.5 L660.4 232.9"/>
<path d="M689.3 267.7 L697.7 242.4 L694.6 225.7"/>
<path d="M1159.4 554.7 L1171.1 577.4 L1184.6 593.4"/>
<path d="M1246.9 635.0 L1239.7 611.0 L1238.7 583.7 L1228.8 569.5"/>
<path d="M920.5 169.9 L922.3 149.6 L912.2 124.3"/>
<path d="M776.0 252.6 L763.0 242.3 L755.6 231.1"/>
<path d="M914.4 296.0 L934.7 302.5 L950.6 311.8"/>
<path d="M873.3 106.4 L860.2 105.7 L841.6 105.9"/>
<path d="M1010.0 252.8 L986.7 250.7 L964.4 250.0"/>
<path d="M963.9 188.4 L978.1 202.2 L999.3 208.4 L1020.9 209.7"/>
<path d="M569.0 500.6 L566.1 525.8"/>
<path d="M984.6 105.5 L984.4 130.9 L992.7 144.9"/>
<path d="M531.1 515.3 L541.3 496.1 L546.2 479.2"/>
<path d="M982.0 236.2 L988.9 249.7 L989.6 271.0 L990.5 281.2 L992.3 295.8"/>
<path d="M951.5 399.2 L935.1 397.1 L923.4 398.2"/>
<path d="M1247.0 532.4 L1268.8 543.6 L1294.2 551.5 L1310.7 556.2 L1326.6 560.2"/>
<path d="M784.5 138.2 L774.1 120.9 L760.9 115.6"/>
<path d="M576.5 484.4 L564.8 491.8 L559.1 517.1 L556.7 529.3"/>
<path d="M1073.5 129.1 L1064.6 119.3 L1065.1 104.2"/>
<path d="M494.2 518.0 L489.4 527.5 L477.2 541.4"/>
<path d="M1198.8 569.9 L1193.8 582.2 L1188.1 596.6"/>
<path d="M584.1 367.9 L586.1 394.1 L582.0 404.0"/>
<path d="M870.9 174.9 L861.6 163.8 L852.6 151.0 L831.3 141.3 L820.6 129.3"/>
<path d="M551.8 148.1 L562.3 166.9 L573.4 179.3 L599.5 188.1"/>
<path d="M954.8 168.1 L947.5 141.4 L953.7 118.0 L965.4 104.5 L973.3 78.1"/>
<path d="M1207.5 564.6 L1221.5 573.0 L1232.7 594.6 L1237.6 619.3"/>
<path d="M773.3 480.1 L770.0 507.4"/>
<path d="M943.3 476.2 L937.7 455.6 L932.6 432.1 L930.0 420.8 L912.0 407.1"/>
<path d="M1233.4 575.9 L1247.2 563.4 L1254.6 544.5 L1268.4 531.6"/>
<path d="M463.8 344.5 L471.8 351.0 L488.8 362.9 L498.9 366.3 L515.0 369.4"/>
<path d="M1216.9 616.9 L1196.1 612.4 L1175.3 618.9"/>
<path d="M870.7 198.5 L869.7 178.1 L884.8 155.4 L903.0 143.7"/>
<path d="M1007.6 185.9 L989.3 171.2 L984.0 151.0 L989.9 128.0"/>
<path d="M1249.8 562.3 L1265.7 574.7 L1288.6 582.0"/>
<path d="M1118.5 90.7 L1110.4 79.5 L1093.9 65.5"/>
<path d="M604.4 289.3 L595.4 277.8 L591.0 266.7 L579.9 259.0"/>
<path d="M894.7 443.1 L909.0 452.0 L933.9 452.2"/>
<path d="M553.6 189.9 L544.1 205.8 L545.1 222.1"/>
<path d="M653.4 483.6 L648.2 466.1 L642.7 450.4 L633.7 429.9"/>
<path d="M1042.2 288.1 L1022.9 290.7 L996.2 291.6"/>
<path d="M1007.0 226.2 L1001.4 241.9 L1001.0 254.4"/>
<path d="M769.7 197.0 L789.7 209.9 L814.3 211.7"/>
</g><g stroke="#e88a72" stroke-width="1.15">
<polyline points="454,105.3 480.2,103.1 508.6,98.7 534.9,94.4"/>
<polyline points="467.1,90 471.5,107.5 486.8,118.4 508.6,144.6 521.8,151.2"/>
<polyline points="454,151.2 495.5,142.5 526.1,125 550.2,120.6"/>
<polyline points="495.5,142.5 497.7,166.5 499.9,190.5 497.7,210.2 502.1,247"/>
<polyline points="454,188.4 499.9,190.5 541.4,184 567.7,181.8 593.9,177.4 607,166.5"/>
<polyline points="513,194.9 517.4,203.7 545.8,214.6 576.4,238.6 585.1,247"/>
<polyline points="554.5,144.6 550.2,164.3 556.7,188.4 548,212.4 537.1,247"/>
<polyline points="545.8,212.4 556.7,221.1 567.7,229.9 576.4,247"/>
<polyline points="593.9,177.4 600.4,194.9 596.1,214.6 587.3,247"/>
<polyline points="454,225.5 482.4,232.1 515.2,225.5 541.4,216.8 548,212.4"/>
<polyline points="624.5,149 633.2,162.1 637.6,188.4 644.2,216.8 650.7,247"/>
<polyline points="628.9,146.8 650.7,153.4 672.6,155.6 694.4,155.6 734,151.2"/>
<polyline points="683.5,173.1 705.4,173.1 734,162.1"/>
<polyline points="705.4,138.1 716.3,155.6 716.3,177.4 711.9,199.3 694.4,221.1 672.6,232.1 644.2,216.8"/>
<polyline points="685.7,90 690.1,116.2 705.4,138.1 734,144.6"/>
<polyline points="620.1,90 622.3,107.5 617.9,125 628.9,146.8"/>
<polyline points="589.5,94.4 628.9,98.7 672.6,107.5 694.4,114"/>
<polyline points="580.8,116.2 598.3,105.3 615.7,94.4"/>
<polyline points="683.5,173.1 690.1,190.5 701,205.8 694.4,229.9 705.4,247"/>
<polyline points="727.2,173.1 718.5,192.7 716.3,212.4"/>
<polyline points="644.2,216.8 672.6,225.5 705.4,238.6 734,243"/>
<polyline points="607,166.5 624.5,149 620.1,138.1"/>
<polyline points="508.6,173.1 526.1,159.9 548,162.1"/>
<polyline points="734,90 742.7,109.7 744.9,140.3 747.1,155.6 749.3,188.4 747.1,212.4 734,232"/>
<polyline points="734,118.4 747.1,118.4 769,107.5 795.2,98.7 828,103.1 860,96"/>
<polyline points="747.1,118.4 766.8,129.3 777.7,144.6 788.6,125 790.8,109.7 795,90"/>
<polyline points="742.7,142.5 775.5,142.5 799.6,151.2 830.2,155.6 869.5,177.4 878.3,181.8"/>
<polyline points="734,181.8 755.9,184 777.7,188.4 784.3,201.5 786.5,221.1 790.8,247 794,265"/>
<polyline points="762.4,199.3 784.3,201.5 817.1,184 834.5,181.8 869.5,184"/>
<polyline points="830.2,155.6 834.5,151.2 865.1,129.3 873.9,111.9 869.5,90"/>
<polyline points="865.1,129.3 887,140.3 902.3,142.5 908.9,125 922,107.5 922,90"/>
<polyline points="902.3,142.5 895.7,155.6 889.2,170.9 882.6,179.6"/>
<polyline points="902.3,142.5 919.8,164.3 924.2,173.1"/>
<polyline points="924.2,173.1 952.6,168.7 974.4,175.2 1001,179.6 1022.9,190.5 1038.2,203.7"/>
<polyline points="924.2,173.1 941.7,155.6 952.6,151.2 976.6,135.9 983.2,133.7"/>
<polyline points="950.4,151.2 950.4,133.7 961.3,116.2 970.1,90"/>
<polyline points="983.2,133.7 974.4,118.4 963.5,109.7 941.7,103.1 922,94.4"/>
<polyline points="983.2,133.7 1001,120.6 1022.9,111.9 1044.7,98.7 1057.8,90"/>
<polyline points="974.4,175.2 981,144.6 983.2,133.7"/>
<polyline points="974.4,175.2 983.2,199.3 981,221.1 970.1,247 950,262 935,275"/>
<polyline points="908.9,184 904.5,201.5 893.6,216.8 880,247 870,265"/>
<polyline points="869.5,184 865.1,205.8 856.4,221.1 838.9,247"/>
<polyline points="856.4,221.1 887,212.4 928.5,214.6 960,225 981,221.1"/>
<polyline points="734,190.5 762.4,199.3"/>
<polyline points="786.5,221.1 810,230 838.9,247"/>
<polyline points="1066.6,98.7 1060,122.8 1051.3,140.3 1044.7,149 1038.2,166.5 1036,188.4 1038.2,203.7 1044.7,221.1 1040.3,247 1030,262"/>
<polyline points="1001,140.3 1044.7,149 1073.1,138.1 1090,128"/>
<polyline points="1044.7,149 1022.9,155.6 1001,160"/>
<polyline points="1110.3,153.4 1105.9,170.9 1099.4,184 1097.2,192.7 1079.7,203.7 1070.9,214.6 1066.6,221.1 1044.7,221.1"/>
<polyline points="1044.7,221.1 1066.6,229.9 1075.3,243"/>
<polyline points="1038.2,225.5 1022.9,238.6 1011.9,247 1000,262 980,272 950,281 935,295"/>
<polyline points="454,264.5 497.7,262.3 515.2,251.4"/>
<polyline points="519.6,268.9 543.6,301.6 558.9,317 572,332.2"/>
<polyline points="543.6,301.6 567.7,277.6 583,257.9 596.1,247"/>
<polyline points="497.7,264.5 524,268.9 563.3,275.4 580.8,279.8 617.9,286.3 650.7,286.3"/>
<polyline points="493.4,262.3 519.6,290.7 541.4,301.6 526.1,312.6 504.3,325.7 482.4,345.4 478,356.3"/>
<polyline points="497.7,295.1 519.6,301.6 543.6,301.6"/>
<polyline points="537.1,303.8 526.1,323.5 517.4,341 513,365 517.4,378.1 513,404 506.5,430.2 508.6,447.7 506.5,480.5 508.6,502.4 526.1,526.4 539.2,530.8"/>
<polyline points="580.8,247 598.3,279.8 589.5,308.2 583,338.8 583,365 593.9,404"/>
<polyline points="607,247 598.3,279.8"/>
<polyline points="596.1,323.5 607,314.8 639.8,306 650.7,295.1 663.8,268.9 677,257.9"/>
<polyline points="620.1,247 646.3,266.7 655.1,286.3"/>
<polyline points="655.1,290.7 646.3,319.1 652.9,338.8 650.7,360.7 642,382.5 644.2,404 642,425.9 646.3,454.3"/>
<polyline points="655.1,290.7 672.6,308.2 683.5,319.1"/>
<polyline points="482.4,345.4 480.2,367.2 467.1,378.1 454,382.5"/>
<polyline points="478,373.8 497.7,367.2 515.2,362.8 532.7,369.4 541.4,386.9 558.9,404 563.3,428"/>
<polyline points="550.2,365 580.8,369.4 607,373.8 640,380"/>
<polyline points="537.1,306 497.7,327.9 482.4,343.2"/>
<polyline points="454,423.7 475.9,421.5 502.1,423.7 530.5,439 563.3,452.1"/>
<polyline points="454,456.5 486.8,449.9 508.6,443.3 541.4,434.6 563.3,428 596.1,423.7 617.9,421.5 650.7,425.9 672.6,423.7"/>
<polyline points="567.7,452.1 574.2,465.2 572,491.4 572,504.5 563.3,517.7 541.4,530.8"/>
<polyline points="567.7,452.1 552.4,465.2 532.7,478.3 510.8,500.2 497.7,522 471.5,533 454,535.1"/>
<polyline points="567.7,452.1 576.4,436.8 589.5,417.1 587.3,404"/>
<polyline points="574.2,458.6 593.9,476.1 607,480.5"/>
<polyline points="602.6,487 585.1,498 569.8,504.5"/>
<polyline points="646.3,454.3 672.6,458.6 705.4,467.4 734,469.6 766.8,470.9 788.6,462.1 806.1,455.6"/>
<polyline points="705.4,467.4 698.8,491.4 694.4,506.7"/>
<polyline points="672.6,458.6 694.4,441.2 716.3,425.9 734,419.3"/>
<polyline points="712,458.6 734,447.7"/>
<polyline points="613.6,421.5 622.3,447.7 617.9,469.6"/>
<polyline points="454,554.8 475.9,543.9 497.7,535.1 519.6,533 537.1,530.8"/>
<polyline points="734,416.2 766.8,414 799.6,411.9 830.2,409.7"/>
<polyline points="766.8,414 773.3,433.7 784.3,446.8 806.1,451.2 830.2,442.5"/>
<polyline points="755.9,416.2 747.1,442.5 742.7,477.4 734,492.7"/>
<polyline points="806.1,453.4 804,473.1 795.2,488.4 790.8,503.7"/>
<polyline points="828,444.6 830.2,477.4 834.5,499.3"/>
<polyline points="734,501.5 769,503.7 799.6,501.5 832.4,501.5 865.1,497.1 887,503.7 908.9,508 930.7,501.5 952.6,501.5 975,490"/>
<polyline points="858.6,438.1 869.5,455.6 873.9,473.1 869.5,488.4 865.1,505.8 867.3,521.1"/>
<polyline points="856.4,435.9 887,438.1 904.5,438.1 919.8,425 930.7,405.3 941.6,394.4"/>
<polyline points="904.5,438.1 891.4,453.4 873.9,468.7"/>
<polyline points="900.1,394 902.3,416.2 904.5,438.1"/>
<polyline points="930.7,455.6 937.3,477.4 950.4,494.9"/>
<polyline points="996.3,438.1 974.4,444.6 952.6,451.2"/>
<polyline points="876.1,470.9 908.9,470.9 941.6,462.1 974.4,468.7 996.3,470.9 1002.8,453.4"/>
<polyline points="935,295.1 952.6,279.8 974.4,268.9 996.3,257.9 1014,251.4"/>
<polyline points="935,334.4 952.6,332.2 974.4,341"/>
<polyline points="941.6,295.1 946,319.1 950.4,338.8"/>
<polyline points="941.6,247 939.5,268.9 935,286.3"/>
<polyline points="963.5,247 952.6,264.5 939.5,273.2"/>
<polyline points="1003.2,434.6 1017.3,415 1031.3,405.1 1066.5,386.9 1080.5,389.7 1080.5,402.3 1073.5,409.3 1069.3,426.2 1073.5,441.7"/>
<polyline points="1031.3,405.1 1045.4,412.2 1052.4,423.4 1063.6,430.4 1073.5,437.4"/>
<polyline points="1031.3,405.1 1017.3,395.3 1010.3,388.3"/>
<polyline points="1003.2,434.6 982.2,441.7 968.1,445.9 948.4,444.5"/>
<polyline points="1003.2,434.6 999,454.3 1000.4,471"/>
<polyline points="940,423.4 948.4,426.2 949.8,440.3 947,454.3"/>
<polyline points="940,405 960,398 985,397"/>
<polyline points="1125,530.2 1158.4,526.8 1183.5,533.5 1208.5,536.8 1233.6,533.5 1266.9,531.8 1281,530.2"/>
<polyline points="1220.2,478.4 1221.9,493.4 1216.9,510.1 1215.2,520.1 1216.9,530.2 1210,560 1200,590 1190,620 1175,660 1165,697"/>
<polyline points="1180.1,500.1 1186.8,506.8 1216.9,520.1 1235.2,533.5 1250.3,548.5 1258.6,560 1270,590 1281,600"/>
<polyline points="1250.3,473.4 1258.6,486.7 1263.6,510.1 1275.3,523.5"/>
<polyline points="1135,575 1170,566 1209,560 1245,556 1281,548"/>
<polyline points="1145,605 1190,612 1240,608 1281,603"/>
<polyline points="1135,640 1170,645 1215,641 1250,648 1281,640"/>
<polyline points="1160,697 1185,676 1215,670 1250,672 1281,666"/>
<polyline points="1095,684 1120,690 1150,686"/>
<polyline points="1240,560 1238,600 1232,640 1240,697"/>
<polyline points="640.6,380 643.7,411 643.7,452 656,474 650,499"/>
<polyline points="693.7,399 725,414 762,411"/>
<polyline points="740.6,411 737.5,442.5 743.7,474 734,499"/>
<polyline points="693.7,442.5 709.4,458 740.6,467.5 771.8,470.6 793.7,464"/>
<polyline points="768.7,414 775,442.5 787.5,461 768.7,489 787.5,505"/>
<polyline points="803,455 812.5,480 797,492.5 793.7,505"/>
<polyline points="818.7,405 825,436 831,461 831,489"/>
<polyline points="850,411 859.4,442.5 875,467.5 875,489 868.7,511"/>
<polyline points="900,420.6 900,458 912.5,480 931,499"/>
<polyline points="912.5,442.5 943.7,458 975,449 1000,442.5"/>
<polyline points="937.5,461 943.7,489 959.4,505"/>
<polyline points="850,486 881,492.5 912.5,486 943.7,480"/>
<polyline points="959,380 968.7,411 959,442.5 968.7,474"/>
<polyline points="662.5,424 678,442.5 693.7,467.5 709.4,489"/>
<polyline points="725,420.6 709.4,452"/>
<polyline points="600,455 631,461 640.6,452"/>
<polyline points="600,427 619,417.5 643.7,420.6"/>
<polyline points="743.7,474 765.6,483 787.5,480 806,492.5"/>
<polyline points="985,460 1000,475 1010,490"/>
<polyline points="920,400 940,425 960,420"/>
<polyline points="683,296.3 701.5,285.2 729.2,277.8"/>
<polyline points="716.3,322.1 736.6,327.7 736.6,340.6 744,351.7 760,348 786.5,351.7"/>
<polyline points="683,346.2 701.5,355.4 701.5,373.9 697.8,396"/>
<polyline points="727.4,368.4 744,381.3 738.5,396"/>
<polyline points="747.7,327.7 758.8,316.6 768,309.2 779.1,296.3 793.9,300"/>
<polyline points="760,287 779.1,296.3"/>
<polyline points="683,373.9 710.7,377.6 744,381.3 771.7,375.8"/>
<polyline points="771.7,375.8 786,383 793,396"/>
<polyline points="805,337 821.6,333.2 842,325.8 860.5,331.4"/>
<polyline points="829,268.5 823.5,281.5 821.6,294.4 823.5,305.5 821.6,333.2"/>
<polyline points="853,263 855,281.5 851,309 855,325.8"/>
<polyline points="879,263 882.6,287 884.5,305.5"/>
<polyline points="905,300 937,296"/>
<polyline points="866,355.4 864,366.5 860.5,381.3 856.8,396"/>
<polyline points="805,366.5 823.5,362.8 842,366.5 866,364.7"/>
<polyline points="842,366.5 845.7,383 842,396"/>
<polyline points="700,330 716.3,322.1"/>
<polyline points="760,270 768,290"/>
<polyline points="900,380 915,390 935,392"/>
<polyline points="870,290 905,286 935,280"/>
<polyline points="810,385 830,380"/>
<polyline points="1142.5,576.3 1183.8,572.6 1202.6,565 1240,553.8 1281,550"/>
<polyline points="1150,606.4 1191.3,617.6 1236.3,610 1281,606.4"/>
<polyline points="1191.3,617.6 1202.6,580 1202.6,565"/>
<polyline points="1180,685 1202.6,655 1236.3,617.6 1247.6,591.4 1281,572.6"/>
<polyline points="1232.6,640 1262.6,640 1281,647.6"/>
<polyline points="1146.3,662.6 1183.8,670 1213.8,670 1255,655"/>
<polyline points="1135,493.8 1138.8,527.6"/>
<polyline points="1247.6,572.6 1240,598.9 1232.6,640"/>
<polyline points="270,90 276,98"/>
<polyline points="415,90 420,98"/>
<polyline points="440,92 452,90"/>
<polyline points="58,221 56,250 59,280 55,329"/>
<polyline points="53,300 62,296"/>
<polyline points="58,557 57,600 60,649"/>
</g><g stroke="#dd7193" stroke-width="1.6">
<polyline points="534.9,90 534.9,118.4 529.4,142.5 524,153.4 517.4,164.3 508.6,186.2 504.3,201.5 506.5,221.1 515.2,247 508.6,268.9 480.2,290.7 462.7,319.1 454,334.4"/>
<polyline points="569.8,90 579.7,103.1 580.8,116.2 585.1,122.8"/>
<polyline points="585.1,120.6 628.9,133.7 650.9,141.5 670.6,137.6 676.4,155.6 685.7,173.1 705.4,186.2 734,203.7 755.9,225.5 773.3,238.6 782.1,247 784.3,247 793,268.9 797.4,290.7 806.1,312.6 825.8,330.1"/>
<polyline points="667.1,90 667.1,109.7 668.2,138.1 670.6,137.6"/>
<polyline points="521.8,151.2 548,151.2 567.7,153.4 580.8,142.5 585.1,131.5"/>
<polyline points="587.3,138.1 604.8,162.1 611.4,177.4 628.9,194.9 644.2,216.8 655.1,238.6 664,247 667.1,264.5 674.8,268.9 685.7,273.2 734,297.3"/>
<polyline points="666,90 650.7,103.1 633.2,118.4 628.9,131.5"/>
<polyline points="812.7,114 819.2,144.6 825.8,162.1"/>
<polyline points="871.7,181.8 876.1,199.3 887,216.8 891.4,232.1 893.6,247 894,262 888,280 882.6,295.1"/>
<polyline points="825.8,232.1 828,247 825.8,268.9 821.4,301.6 819.2,317"/>
<polyline points="454,351.9 486.8,349.7 519.6,347.5 552.4,338.8 580.8,346.5 602.6,351.9 620.1,363.9 650.7,362.8 683.5,360.7 734,351.9 755.9,354.1 777.7,351.9 799.6,349.7"/>
<polyline points="734,325.7 755.9,330.1 777.7,338.8 799.6,341"/>
<polyline points="882.6,295.1 873.9,312.6 860.8,330.1 852,343.2"/>
<polyline points="935,369.4 952.6,382.5 974.4,400"/>
<polyline points="734,389 755.9,378.1 777.7,369.4 799.6,360.7"/>
<polyline points="734,404 705.4,408.4 683.5,412.7 666,423.7 655.1,447.7 646.3,463 637.6,476.1 628.9,480.5"/>
<polyline points="602.6,487 611.4,480.5 635.4,478.3 646.3,491.4 661.7,500.2 681.3,503.5 711.9,504.5 734,500.2"/>
<polyline points="696.6,491.4 698.8,504.5"/>
<polyline points="839,378 838.9,394.4 836.7,409.7 838.9,425 836.7,440.3 830.2,451.2"/>
<polyline points="821.4,396 838.9,396.6 856.4,409.7 891.4,403.1 926.3,398.7 941.6,394.4"/>
<polyline points="940,399.5 961.1,410.7 975.1,417.8 993.4,426.2 1003.2,434.6 1017.3,443.1 1038.4,447.3 1051,447.3"/>
<polyline points="934,382 944.2,392.5 954,393.2 969.5,393.9 982.2,400.9"/>
<polyline points="1281,453.4 1250.3,463.4 1233.6,468.4 1216.9,478.4 1191.8,483.4 1170.1,483.4 1153.4,483.4 1141.7,496.8 1133.4,513.5 1125,526.8 1130,560 1135,600 1140,640 1146,674 1152,697"/>
<polyline points="1166.8,483.4 1183.5,493.4 1196.8,511.8 1208.5,530.2 1225.2,543.5 1236.9,560 1250,580 1262,600 1281,620"/>
<polyline points="1246.9,470 1258.6,483.4 1266.9,495.1 1281,510.1"/>
<polyline points="683,298.1 701.5,307.4 720,320.3 747.7,327.7 771.7,336.9 786.5,340.6"/>
<polyline points="683,361 701.5,366.5 727.4,368.4 744,351.7 766.2,349.9 786.5,351.7 813,349.9"/>
<polyline points="792,263 793.9,281.5 797.6,300 779.1,318.5 773.6,336.9 775.4,359.1 771.7,377.6 775.4,396"/>
<polyline points="738.5,396 756.9,383.1 771.7,375.8 786.5,366.5"/>
<polyline points="683,264.8 729.2,277.8 738.5,285.2 747.7,307.4 760.6,314.8 769.9,333.2"/>
<polyline points="797.6,300 805,305.5 823.5,305.5 855,308.3 879,306.5 901.1,322.1 904.8,340.6 904.8,355.4 897.4,373.9 893.7,396"/>
<polyline points="884.5,305.5 875.2,316.6 860.5,331.4 856.8,340.6"/>
<polyline points="856.8,340.6 879,337 901.1,324 915.9,305.5 937,294.4"/>
<polyline points="860,348 888,352 910,346 937,337"/>
</g></g><g fill="none" stroke="#75a8e3" stroke-width=".9" stroke-dasharray="2.2 2">
<polyline points="548,697 860,571 935.6,540 1073.7,477 1281,387"/>
<polyline points="510.5,697 576,623.6 672.8,561.3"/>
<polyline points="530,697 554.8,556.4"/>
<polyline points="554.8,556 599,674.4 599,697"/>
<polyline points="689,540 630,697"/>
<polyline points="689,540 741.6,697"/>
<polyline points="689,540 786,697"/>
<polyline points="518.7,697 568,630"/>
<polyline points="180,600 194,643 202,670 215,697"/>
<polyline points="185,600 200,643 212.4,670 226,697"/>
<polyline points="893,540 962,596 1024,697"/>
<polyline points="1073.7,440 1210.6,460.2"/>
<polyline points="1073.7,440 1160.5,477"/>
<polyline points="942,352 1027,358 1281,375"/>
<polyline points="1057,360 1194,320 1281,292"/>
<polyline points="1073.7,255.3 1281,248.6"/>
<polyline points="1234,150.5 1263.4,200 1281,230"/>
<polyline points="1180,90 1215,140 1234,150.5"/>
<polyline points="1090,445 1150,452.5 1281,458"/>
<polyline points="1090,465.6 1127.5,452.5 1157.5,430"/>
</g>
<path d="M1076.7 246.7 L1068 238 L1060 230" fill="none" stroke="#99ccff" stroke-width="1.6" stroke-linecap="round"/>
<path d="M1073 250 L1055 252 L1035 253.3" fill="none" stroke="#99ccff" stroke-width="1.8" stroke-linecap="round"/>
<path d="M1062 268 L1055 270" fill="none" stroke="#99ccff" stroke-width="2.2" stroke-linecap="round"/>
<path d="M1030 276.7 L1020 273 L1012 270" fill="none" stroke="#99ccff" stroke-width="1.3" stroke-linecap="round"/>
<path d="M1020 296.7 L1005 295 L990 293.3" fill="none" stroke="#99ccff" stroke-width="2.6" stroke-linecap="round"/>
<path d="M1013 316.7 L995 317 L985 316.7" fill="none" stroke="#99ccff" stroke-width="1.4" stroke-linecap="round"/>
<path d="M1117 598 L1125 598" fill="none" stroke="#99ccff" stroke-width="3" stroke-linecap="round"/>
<path d="M1114 620 L1121 617" fill="none" stroke="#99ccff" stroke-width="2" stroke-linecap="round"/>
<path d="M860 350 L842 349.9 L823.5 355.4 L805 357 L785 358 L770 356 L750 360 L720 362 L700 358" fill="none" stroke="#99ccff" stroke-width="1" opacity=".8"/>
<rect x="837.7" y="350.2" width="3" height="3" fill="#b8368a"/>
<g font-family="Liberation Sans">
<rect x="808" y="95" width="30.0" height="8.4" rx="1.2" fill="#4e9a4f" stroke="#2f7a35" stroke-width=".8"/><text x="823.0" y="101.7" font-size="6.9" font-weight="700" fill="#f4f0b0" text-anchor="middle" textLength="24.0" lengthAdjust="spacingAndGlyphs">A1139</text>
<rect x="703.8" y="111.7" width="14.2" height="7.3" rx="1.2" fill="#4e9a4f" stroke="#2f7a35" stroke-width=".8"/><text x="710.9" y="117.5" font-size="6.0" font-weight="700" fill="#f4f0b0" text-anchor="middle" textLength="11.4" lengthAdjust="spacingAndGlyphs">A6</text>
<rect x="589.8" y="191" width="22.6" height="8.0" rx="1.2" fill="#4e9a4f" stroke="#2f7a35" stroke-width=".8"/><text x="601.1" y="197.4" font-size="6.6" font-weight="700" fill="#f4f0b0" text-anchor="middle" textLength="18.1" lengthAdjust="spacingAndGlyphs">A429</text>
<rect x="705.5" y="208.5" width="24.3" height="8.5" rx="1.2" fill="#4e9a4f" stroke="#2f7a35" stroke-width=".8"/><text x="717.6" y="215.3" font-size="7.0" font-weight="700" fill="#f4f0b0" text-anchor="middle" textLength="19.4" lengthAdjust="spacingAndGlyphs">A508</text>
<rect x="583" y="236" width="18.0" height="7.6" rx="1.2" fill="#4e9a4f" stroke="#2f7a35" stroke-width=".8"/><text x="592.0" y="242.1" font-size="6.2" font-weight="700" fill="#f4f0b0" text-anchor="middle" textLength="14.4" lengthAdjust="spacingAndGlyphs">A44</text>
<rect x="605" y="241" width="24.0" height="8.3" rx="1.2" fill="#4e9a4f" stroke="#2f7a35" stroke-width=".8"/><text x="617.0" y="247.6" font-size="6.8" font-weight="700" fill="#f4f0b0" text-anchor="middle" textLength="19.2" lengthAdjust="spacingAndGlyphs">A361</text>
<rect x="830.6" y="224.6" width="24.4" height="8.4" rx="1.2" fill="#4e9a4f" stroke="#2f7a35" stroke-width=".8"/><text x="842.8" y="231.3" font-size="6.9" font-weight="700" fill="#f4f0b0" text-anchor="middle" textLength="19.5" lengthAdjust="spacingAndGlyphs">A505</text>
<rect x="1055" y="91.2" width="23.7" height="8.2" rx="1.2" fill="#4e9a4f" stroke="#2f7a35" stroke-width=".8"/><text x="1066.8" y="97.8" font-size="6.7" font-weight="700" fill="#f4f0b0" text-anchor="middle" textLength="19.0" lengthAdjust="spacingAndGlyphs">A140</text>
<rect x="940" y="131.7" width="30.0" height="8.3" rx="1.2" fill="#4e9a4f" stroke="#2f7a35" stroke-width=".8"/><text x="955.0" y="138.3" font-size="6.8" font-weight="700" fill="#f4f0b0" text-anchor="middle" textLength="24.0" lengthAdjust="spacingAndGlyphs">A1065</text>
<rect x="1052.6" y="225" width="17.4" height="8.6" rx="1.2" fill="#4e9a4f" stroke="#2f7a35" stroke-width=".8"/><text x="1061.3" y="231.9" font-size="7.1" font-weight="700" fill="#f4f0b0" text-anchor="middle" textLength="13.9" lengthAdjust="spacingAndGlyphs">A14</text>
<rect x="935.8" y="301.4" width="17.7" height="9.0" rx="1.2" fill="#4e9a4f" stroke="#2f7a35" stroke-width=".8"/><text x="944.6" y="308.6" font-size="7.2" font-weight="700" fill="#f4f0b0" text-anchor="middle" textLength="14.2" lengthAdjust="spacingAndGlyphs">A12</text>
<rect x="593" y="431.8" width="24.0" height="7.7" rx="1.2" fill="#4e9a4f" stroke="#2f7a35" stroke-width=".8"/><text x="605.0" y="438.0" font-size="6.3" font-weight="700" fill="#f4f0b0" text-anchor="middle" textLength="19.2" lengthAdjust="spacingAndGlyphs">A343</text>
<rect x="697.8" y="431" width="18.2" height="8.0" rx="1.2" fill="#4e9a4f" stroke="#2f7a35" stroke-width=".8"/><text x="706.9" y="437.4" font-size="6.6" font-weight="700" fill="#f4f0b0" text-anchor="middle" textLength="14.6" lengthAdjust="spacingAndGlyphs">A31</text>
<rect x="720.5" y="431" width="24.0" height="8.0" rx="1.2" fill="#4e9a4f" stroke="#2f7a35" stroke-width=".8"/><text x="732.5" y="437.4" font-size="6.6" font-weight="700" fill="#f4f0b0" text-anchor="middle" textLength="19.2" lengthAdjust="spacingAndGlyphs">A287</text>
<rect x="475.7" y="445" width="24.3" height="8.6" rx="1.2" fill="#4e9a4f" stroke="#2f7a35" stroke-width=".8"/><text x="487.9" y="451.9" font-size="7.1" font-weight="700" fill="#f4f0b0" text-anchor="middle" textLength="19.4" lengthAdjust="spacingAndGlyphs">A303</text>
<rect x="723" y="504.6" width="19.0" height="8.4" rx="1.2" fill="#4e9a4f" stroke="#2f7a35" stroke-width=".8"/><text x="732.5" y="511.3" font-size="6.9" font-weight="700" fill="#f4f0b0" text-anchor="middle" textLength="15.2" lengthAdjust="spacingAndGlyphs">A27</text>
<rect x="475.7" y="518" width="24.3" height="8.3" rx="1.2" fill="#4e9a4f" stroke="#2f7a35" stroke-width=".8"/><text x="487.9" y="524.6" font-size="6.8" font-weight="700" fill="#f4f0b0" text-anchor="middle" textLength="19.4" lengthAdjust="spacingAndGlyphs">A354</text>
<rect x="1068" y="431.8" width="15.7" height="8.4" rx="1.2" fill="#4e9a4f" stroke="#2f7a35" stroke-width=".8"/><text x="1075.8" y="438.5" font-size="6.9" font-weight="700" fill="#f4f0b0" text-anchor="middle" textLength="12.6" lengthAdjust="spacingAndGlyphs">A2</text>
<rect x="245" y="89" width="23.0" height="7.0" rx="1.2" fill="#4e9a4f" stroke="#2f7a35" stroke-width=".8"/><text x="256.5" y="94.6" font-size="5.7" font-weight="700" fill="#f4f0b0" text-anchor="middle" textLength="18.4" lengthAdjust="spacingAndGlyphs">A470</text>
<rect x="448" y="518.7" width="13.7" height="8.3" rx="1.2" fill="#4e9a4f" stroke="#2f7a35" stroke-width=".8"/><text x="454.9" y="525.3" font-size="6.8" font-weight="700" fill="#f4f0b0" text-anchor="middle" textLength="11.0" lengthAdjust="spacingAndGlyphs">A37</text>
<rect x="661" y="110.7" width="14.7" height="7.0" rx="1.2" fill="#5189d0" stroke="#ffffff" stroke-width=".8"/><text x="668.4" y="116.3" font-size="5.7" font-weight="700" fill="#ffffff" text-anchor="middle" textLength="11.8" lengthAdjust="spacingAndGlyphs">M1</text>
<rect x="796.6" y="106.7" width="27.4" height="8.3" rx="1.2" fill="#5189d0" stroke="#ffffff" stroke-width=".8"/><text x="810.3" y="113.3" font-size="6.8" font-weight="700" fill="#ffffff" text-anchor="middle" textLength="21.9" lengthAdjust="spacingAndGlyphs">A1(M)</text>
<rect x="455" y="242" width="20.7" height="7.3" rx="1.2" fill="#5189d0" stroke="#ffffff" stroke-width=".8"/><text x="465.4" y="247.8" font-size="6.0" font-weight="700" fill="#ffffff" text-anchor="middle" textLength="16.6" lengthAdjust="spacingAndGlyphs">M50</text>
<rect x="809" y="286" width="28.0" height="8.7" rx="1.2" fill="#5189d0" stroke="#ffffff" stroke-width=".8"/><text x="823.0" y="293.0" font-size="7.1" font-weight="700" fill="#ffffff" text-anchor="middle" textLength="22.4" lengthAdjust="spacingAndGlyphs">A1(M)</text>
<rect x="835.6" y="303.7" width="21.8" height="9.3" rx="1.2" fill="#5189d0" stroke="#ffffff" stroke-width=".8"/><text x="846.5" y="311.1" font-size="7.2" font-weight="700" fill="#ffffff" text-anchor="middle" textLength="17.4" lengthAdjust="spacingAndGlyphs">M25</text>
<rect x="874" y="302" width="19.4" height="8.4" rx="1.2" fill="#5189d0" stroke="#ffffff" stroke-width=".8"/><text x="883.7" y="308.7" font-size="6.9" font-weight="700" fill="#ffffff" text-anchor="middle" textLength="15.5" lengthAdjust="spacingAndGlyphs">M11</text>
<rect x="751.5" y="328.3" width="20.5" height="8.4" rx="1.2" fill="#5189d0" stroke="#ffffff" stroke-width=".8"/><text x="761.8" y="335.0" font-size="6.9" font-weight="700" fill="#ffffff" text-anchor="middle" textLength="16.4" lengthAdjust="spacingAndGlyphs">M40</text>
<rect x="727.8" y="354" width="16.0" height="8.4" rx="1.2" fill="#5189d0" stroke="#ffffff" stroke-width=".8"/><text x="735.8" y="360.7" font-size="6.9" font-weight="700" fill="#ffffff" text-anchor="middle" textLength="12.8" lengthAdjust="spacingAndGlyphs">M4</text>
<rect x="666.4" y="414.5" width="14.6" height="8.0" rx="1.2" fill="#5189d0" stroke="#ffffff" stroke-width=".8"/><text x="673.7" y="420.9" font-size="6.6" font-weight="700" fill="#ffffff" text-anchor="middle" textLength="11.7" lengthAdjust="spacingAndGlyphs">M3</text>
<rect x="830.6" y="415" width="20.1" height="8.5" rx="1.2" fill="#5189d0" stroke="#ffffff" stroke-width=".8"/><text x="840.7" y="421.8" font-size="7.0" font-weight="700" fill="#ffffff" text-anchor="middle" textLength="16.1" lengthAdjust="spacingAndGlyphs">M23</text>
<rect x="606" y="478" width="20.3" height="8.3" rx="1.2" fill="#5189d0" stroke="#ffffff" stroke-width=".8"/><text x="616.1" y="484.6" font-size="6.8" font-weight="700" fill="#ffffff" text-anchor="middle" textLength="16.2" lengthAdjust="spacingAndGlyphs">M27</text>
<rect x="955" y="386" width="15.0" height="8.0" rx="1.2" fill="#5189d0" stroke="#ffffff" stroke-width=".8"/><text x="962.5" y="392.4" font-size="6.6" font-weight="700" fill="#ffffff" text-anchor="middle" textLength="12.0" lengthAdjust="spacingAndGlyphs">M2</text>
<rect x="949.5" y="402.5" width="20.0" height="8.5" rx="1.2" fill="#5189d0" stroke="#ffffff" stroke-width=".8"/><text x="959.5" y="409.3" font-size="7.0" font-weight="700" fill="#ffffff" text-anchor="middle" textLength="16.0" lengthAdjust="spacingAndGlyphs">M20</text>
<rect x="448" y="321.3" width="13.6" height="7.7" rx="1.2" fill="#5189d0" stroke="#ffffff" stroke-width=".8"/><text x="454.8" y="327.5" font-size="6.3" font-weight="700" fill="#ffffff" text-anchor="middle" textLength="10.9" lengthAdjust="spacingAndGlyphs">M5</text>
<rect x="1129.5" y="614.6" width="23.5" height="7.6" rx="1.2" fill="#f5df86" stroke="#6b5a22" stroke-width=".8"/><text x="1141.2" y="620.7" font-size="6.2" font-weight="700" fill="#222222" text-anchor="middle" textLength="18.8" lengthAdjust="spacingAndGlyphs">D901</text>
<rect x="1129.5" y="639.6" width="27.9" height="8.2" rx="1.2" fill="#f5df86" stroke="#6b5a22" stroke-width=".8"/><text x="1143.5" y="646.2" font-size="6.7" font-weight="700" fill="#222222" text-anchor="middle" textLength="22.3" lengthAdjust="spacingAndGlyphs">D1001</text>
<rect x="1167.3" y="636.3" width="23.0" height="8.2" rx="1.2" fill="#f5df86" stroke="#6b5a22" stroke-width=".8"/><text x="1178.8" y="642.9" font-size="6.7" font-weight="700" fill="#222222" text-anchor="middle" textLength="18.4" lengthAdjust="spacingAndGlyphs">D928</text>
<rect x="1173.8" y="662.2" width="23.0" height="8.3" rx="1.2" fill="#f5df86" stroke="#6b5a22" stroke-width=".8"/><text x="1185.3" y="668.8" font-size="6.8" font-weight="700" fill="#222222" text-anchor="middle" textLength="18.4" lengthAdjust="spacingAndGlyphs">D925</text>
<rect x="1207.3" y="532.7" width="18.3" height="8.3" rx="1.2" fill="#d9534f" stroke="#ffffff" stroke-width=".8"/><text x="1216.4" y="539.3" font-size="6.8" font-weight="700" fill="#ffffff" text-anchor="middle" textLength="14.6" lengthAdjust="spacingAndGlyphs">A26</text>
<rect x="1169.6" y="677" width="18.4" height="8.2" rx="1.2" fill="#d9534f" stroke="#ffffff" stroke-width=".8"/><text x="1178.8" y="683.6" font-size="6.7" font-weight="700" fill="#ffffff" text-anchor="middle" textLength="14.7" lengthAdjust="spacingAndGlyphs">A16</text>
<rect x="782" y="356" width="7" height="7" fill="#fff" stroke="#555" stroke-width=".7"/><path d="M783.5 361.5l4-4" stroke="#333" stroke-width="1.2"/>
<rect x="830" y="428.5" width="7" height="7" fill="#fff" stroke="#555" stroke-width=".7"/><path d="M831.5 434.0l4-4" stroke="#333" stroke-width="1.2"/>
<rect x="559.5" y="517" width="7" height="7" fill="#fff" stroke="#555" stroke-width=".7"/><path d="M561.0 522.5l4-4" stroke="#333" stroke-width="1.2"/>
</g><g font-family="Liberation Sans" stroke="#fff" stroke-opacity=".9" stroke-width="2.8" stroke-linejoin="round">
<text x="180" y="95.5" font-size="9.5" fill="#474c57" textLength="56" lengthAdjust="spacingAndGlyphs">Machynlleth</text>
<text x="17" y="661" font-size="9.5" fill="#474c57" textLength="42" lengthAdjust="spacingAndGlyphs">Plymouth</text>
<text x="322" y="97" font-size="9.5" fill="#474c57" textLength="58" lengthAdjust="spacingAndGlyphs">Montgomery</text>
<text x="543.5" y="92.7" font-size="12.5" fill="#3a3e49" textLength="48.4" lengthAdjust="spacingAndGlyphs">Walsall</text>
<text x="527.5" y="111.7" font-size="12.5" fill="#3a3e49" textLength="46" lengthAdjust="spacingAndGlyphs">Dudley</text>
<text x="446" y="116" font-size="9.5" fill="#474c57" textLength="60" lengthAdjust="spacingAndGlyphs">Kingswinford</text>
<text x="556" y="131.7" font-size="15" fill="#3a3e49" textLength="98.5" lengthAdjust="spacingAndGlyphs">Birmingham</text>
<text x="453" y="132.4" font-size="9.5" fill="#474c57" textLength="56" lengthAdjust="spacingAndGlyphs">Stourbridge</text>
<text x="427" y="147.8" font-size="9.5" fill="#474c57" textLength="66" lengthAdjust="spacingAndGlyphs">Kidderminster</text>
<text x="640.3" y="106" font-size="9.5" fill="#474c57" textLength="41.7" lengthAdjust="spacingAndGlyphs">Hinckley</text>
<text x="685.4" y="139" font-size="11" fill="#3a3e49" textLength="54" lengthAdjust="spacingAndGlyphs">Kettering</text>
<text x="657.7" y="153.5" font-size="12.5" fill="#3a3e49" textLength="37.7" lengthAdjust="spacingAndGlyphs">Rugby</text>
<text x="757" y="155" font-size="11" fill="#3a3e49" textLength="69.5" lengthAdjust="spacingAndGlyphs">Huntingdon</text>
<text x="548.5" y="161.8" font-size="9.5" fill="#474c57" textLength="43.4" lengthAdjust="spacingAndGlyphs">Redditch</text>
<text x="465.7" y="170.8" font-size="9.5" fill="#474c57" textLength="42.7" lengthAdjust="spacingAndGlyphs">Droitwich</text>
<text x="674.4" y="172.5" font-size="9.5" fill="#474c57" textLength="41" lengthAdjust="spacingAndGlyphs">Daventry</text>
<text x="748.8" y="169.5" font-size="9.5" fill="#474c57" textLength="80" lengthAdjust="spacingAndGlyphs">Wellingborough</text>
<text x="582" y="176.8" font-size="11" fill="#3a3e49" textLength="41" lengthAdjust="spacingAndGlyphs">Warwick</text>
<text x="437" y="188.5" font-size="11" fill="#3a3e49" textLength="60" lengthAdjust="spacingAndGlyphs">Worcester</text>
<text x="773" y="185" font-size="9.5" fill="#474c57" textLength="42.4" lengthAdjust="spacingAndGlyphs">St Neots</text>
<text x="748" y="198.5" font-size="9.5" fill="#474c57" textLength="26" lengthAdjust="spacingAndGlyphs">Olney</text>
<text x="788" y="200" font-size="11" fill="#3a3e49" textLength="46.7" lengthAdjust="spacingAndGlyphs">Bedford</text>
<text x="450" y="207.5" font-size="9.5" fill="#474c57" textLength="30" lengthAdjust="spacingAndGlyphs">Great</text>
<text x="436" y="217.6" font-size="9.5" fill="#474c57" textLength="44" lengthAdjust="spacingAndGlyphs">Malvern</text>
<text x="546.8" y="212.5" font-size="9.5" fill="#474c57" textLength="43.4" lengthAdjust="spacingAndGlyphs">Evesham</text>
<text x="652" y="203.5" font-size="9.5" fill="#474c57" textLength="45" lengthAdjust="spacingAndGlyphs">Towcester</text>
<text x="800" y="211" font-size="9.5" fill="#474c57" textLength="27.4" lengthAdjust="spacingAndGlyphs">Sandy</text>
<text x="645.3" y="218.6" font-size="9.5" fill="#474c57" textLength="41" lengthAdjust="spacingAndGlyphs">Banbury</text>
<text x="457.4" y="236" font-size="9.5" fill="#474c57" textLength="52.8" lengthAdjust="spacingAndGlyphs">Tewkesbury</text>
<text x="786" y="233.6" font-size="9.5" fill="#474c57" textLength="39.4" lengthAdjust="spacingAndGlyphs">Shefford</text>
<text x="815.6" y="244.6" font-size="9.5" fill="#474c57" textLength="35" lengthAdjust="spacingAndGlyphs">Hitchin</text>
<text x="526.8" y="257" font-size="11" fill="#3a3e49" textLength="70" lengthAdjust="spacingAndGlyphs">Cheltenham</text>
<text x="431" y="265.3" font-size="11" fill="#3a3e49" textLength="62" lengthAdjust="spacingAndGlyphs">Gloucester</text>
<text x="794.6" y="260.3" font-size="11" fill="#3a3e49" textLength="33.7" lengthAdjust="spacingAndGlyphs">Luton</text>
<text x="668" y="277" font-size="11" fill="#3a3e49" textLength="57.4" lengthAdjust="spacingAndGlyphs">Aylesbury</text>
<text x="465" y="280.3" font-size="9.5" fill="#474c57" textLength="45" lengthAdjust="spacingAndGlyphs">Newnham</text>
<text x="658.7" y="291" font-size="11" fill="#3a3e49" textLength="40" lengthAdjust="spacingAndGlyphs">Oxford</text>
<text x="582" y="284.3" font-size="9.5" fill="#474c57" textLength="34.4" lengthAdjust="spacingAndGlyphs">Witney</text>
<text x="747.8" y="292.7" font-size="11" fill="#3a3e49" textLength="55.4" lengthAdjust="spacingAndGlyphs">St Albans</text>
<text x="792" y="277" font-size="8" fill="#474c57" textLength="15" lengthAdjust="spacingAndGlyphs">LTN</text>
<text x="790.5" y="362.5" font-size="7.5" fill="#474c57" textLength="16" lengthAdjust="spacingAndGlyphs">LHR</text>
<text x="839" y="436.8" font-size="7.5" fill="#474c57" textLength="17" lengthAdjust="spacingAndGlyphs">LGW</text>
<text x="463.4" y="294.4" font-size="9.5" fill="#474c57" textLength="33.4" lengthAdjust="spacingAndGlyphs">Stroud</text>
<text x="545" y="300.4" font-size="9.5" fill="#474c57" textLength="56.8" lengthAdjust="spacingAndGlyphs">Cirencester</text>
<text x="708.8" y="310.4" font-size="11" fill="#3a3e49" textLength="27.7" lengthAdjust="spacingAndGlyphs">High</text>
<text x="780" y="313.7" font-size="12.5" fill="#3a3e49" textLength="44" lengthAdjust="spacingAndGlyphs">Barnet</text>
<text x="479.4" y="307" font-size="9.5" fill="#474c57" textLength="33.4" lengthAdjust="spacingAndGlyphs">Dursley</text>
<text x="555" y="315.4" font-size="9.5" fill="#474c57" textLength="45.7" lengthAdjust="spacingAndGlyphs">Faringdon</text>
<text x="681" y="320.3" font-size="11" fill="#3a3e49" textLength="54.4" lengthAdjust="spacingAndGlyphs">Wycombe</text>
<text x="876.7" y="102.7" font-size="9.5" fill="#474c57" textLength="26.7" lengthAdjust="spacingAndGlyphs">March</text>
<text x="923.4" y="96.7" font-size="9.5" fill="#474c57" textLength="45" lengthAdjust="spacingAndGlyphs">Downham</text>
<text x="923.4" y="105.7" font-size="9.5" fill="#474c57" textLength="31.7" lengthAdjust="spacingAndGlyphs">Market</text>
<text x="979.5" y="98.4" font-size="9.5" fill="#474c57" textLength="59" lengthAdjust="spacingAndGlyphs">Wymondham</text>
<text x="994.6" y="109" font-size="9.5" fill="#474c57" textLength="60" lengthAdjust="spacingAndGlyphs">Attleborough</text>
<text x="905" y="140" font-size="11" fill="#3a3e49" textLength="14.4" lengthAdjust="spacingAndGlyphs">Ely</text>
<text x="983" y="135" font-size="11" fill="#3a3e49" textLength="42.4" lengthAdjust="spacingAndGlyphs">Thetford</text>
<text x="1042" y="145" font-size="9.5" fill="#474c57" textLength="18.4" lengthAdjust="spacingAndGlyphs">Diss</text>
<text x="1048.6" y="157.5" font-size="9.5" fill="#474c57" textLength="15" lengthAdjust="spacingAndGlyphs">Eye</text>
<text x="977.5" y="164.5" font-size="11" fill="#3a3e49" textLength="36" lengthAdjust="spacingAndGlyphs">Bury St</text>
<text x="977.5" y="174.5" font-size="11" fill="#3a3e49" textLength="45.4" lengthAdjust="spacingAndGlyphs">Edmunds</text>
<text x="1107" y="165.8" font-size="9.5" fill="#474c57" textLength="48.4" lengthAdjust="spacingAndGlyphs">Southwold</text>
<text x="880" y="183.5" font-size="12.5" fill="#3a3e49" textLength="64.4" lengthAdjust="spacingAndGlyphs">Cambridge</text>
<text x="1103" y="182.8" font-size="9.5" fill="#474c57" textLength="61.4" lengthAdjust="spacingAndGlyphs">Saxmundham</text>
<text x="1024" y="189" font-size="11" fill="#3a3e49" textLength="59.4" lengthAdjust="spacingAndGlyphs">Stowmarket</text>
<text x="1099" y="193.5" font-size="9.5" fill="#474c57" textLength="33" lengthAdjust="spacingAndGlyphs">Leiston</text>
<text x="1094.7" y="207" font-size="9.5" fill="#474c57" textLength="46.7" lengthAdjust="spacingAndGlyphs">Aldeburgh</text>
<text x="888.4" y="213.5" font-size="9.5" fill="#474c57" textLength="40" lengthAdjust="spacingAndGlyphs">Haverhill</text>
<text x="1024" y="218.6" font-size="12.5" fill="#3a3e49" textLength="43.4" lengthAdjust="spacingAndGlyphs">Ipswich</text>
<text x="901.7" y="235.3" font-size="9.5" fill="#474c57" textLength="32.4" lengthAdjust="spacingAndGlyphs">Saffron</text>
<text x="901.7" y="244.6" font-size="9.5" fill="#474c57" textLength="32.7" lengthAdjust="spacingAndGlyphs">Walden</text>
<text x="1028.6" y="244.3" font-size="9.5" fill="#474c57" textLength="47.4" lengthAdjust="spacingAndGlyphs">Felixstowe</text>
<text x="902.7" y="263" font-size="11" fill="#3a3e49" textLength="45.7" lengthAdjust="spacingAndGlyphs">Braintree</text>
<text x="1009" y="262" font-size="12.5" fill="#3a3e49" textLength="61.8" lengthAdjust="spacingAndGlyphs">Colchester</text>
<text x="868.3" y="273.6" font-size="9.5" fill="#474c57" textLength="36.7" lengthAdjust="spacingAndGlyphs">Bishop's</text>
<text x="868.3" y="282.7" font-size="9.5" fill="#474c57" textLength="36.7" lengthAdjust="spacingAndGlyphs">Stortford</text>
<text x="928.4" y="281.3" font-size="9.5" fill="#474c57" textLength="32.7" lengthAdjust="spacingAndGlyphs">Witham</text>
<text x="1003" y="287" font-size="11" fill="#3a3e49" textLength="40.7" lengthAdjust="spacingAndGlyphs">Clacton-</text>
<text x="1010" y="297" font-size="11" fill="#3a3e49" textLength="34.4" lengthAdjust="spacingAndGlyphs">on-Sea</text>
<text x="867.3" y="297" font-size="12.5" fill="#3a3e49" textLength="67.8" lengthAdjust="spacingAndGlyphs">Chelmsford</text>
<text x="880" y="322.7" font-size="11" fill="#3a3e49" textLength="50" lengthAdjust="spacingAndGlyphs">Brentwood</text>
<text x="574.2" y="336.7" font-size="11" fill="#3a3e49" textLength="50.4" lengthAdjust="spacingAndGlyphs">Swindon</text>
<text x="775" y="349.4" font-size="14.5" fill="#3a3e49" textLength="60.8" lengthAdjust="spacingAndGlyphs">London</text>
<text x="679.7" y="346.7" font-size="9.5" fill="#474c57" textLength="60.8" lengthAdjust="spacingAndGlyphs">Maidenhead</text>
<text x="443" y="360.7" font-size="12.5" fill="#3a3e49" textLength="45" lengthAdjust="spacingAndGlyphs">Bristol</text>
<text x="522.8" y="364.4" font-size="9.5" fill="#474c57" textLength="24.7" lengthAdjust="spacingAndGlyphs">Calne</text>
<text x="551.2" y="368.4" font-size="9.5" fill="#474c57" textLength="58.4" lengthAdjust="spacingAndGlyphs">Marlborough</text>
<text x="654.7" y="361.7" font-size="11" fill="#3a3e49" textLength="47.4" lengthAdjust="spacingAndGlyphs">Reading</text>
<text x="480.7" y="378.4" font-size="11" fill="#3a3e49" textLength="26" lengthAdjust="spacingAndGlyphs">Bath</text>
<text x="688.7" y="377.4" font-size="9.5" fill="#474c57" textLength="46.7" lengthAdjust="spacingAndGlyphs">Bracknell</text>
<text x="784" y="380" font-size="12.5" fill="#3a3e49" textLength="56" lengthAdjust="spacingAndGlyphs">Croydon</text>
<text x="539.5" y="386.8" font-size="9.5" fill="#474c57" textLength="33.4" lengthAdjust="spacingAndGlyphs">Devizes</text>
<text x="686" y="390.8" font-size="9.5" fill="#474c57" textLength="52.8" lengthAdjust="spacingAndGlyphs">Camberley</text>
<text x="443" y="394" font-size="9.5" fill="#474c57" textLength="57" lengthAdjust="spacingAndGlyphs">Trowbridge</text>
<text x="772" y="399" font-size="11" fill="#3a3e49" textLength="42.4" lengthAdjust="spacingAndGlyphs">Woking</text>
<text x="649.7" y="405" font-size="11" fill="#3a3e49" textLength="70.8" lengthAdjust="spacingAndGlyphs">Basingstoke</text>
<text x="466.7" y="406.8" font-size="9.5" fill="#474c57" textLength="46" lengthAdjust="spacingAndGlyphs">Radstock</text>
<text x="770.5" y="412.8" font-size="11" fill="#3a3e49" textLength="55" lengthAdjust="spacingAndGlyphs">Guildford</text>
<text x="486.7" y="420.8" font-size="9.5" fill="#474c57" textLength="28.4" lengthAdjust="spacingAndGlyphs">Frome</text>
<text x="577.6" y="420.2" font-size="11" fill="#3a3e49" textLength="41" lengthAdjust="spacingAndGlyphs">Andover</text>
<text x="685.4" y="419" font-size="9.5" fill="#474c57" textLength="42.4" lengthAdjust="spacingAndGlyphs">Farnham</text>
<text x="781" y="440.2" font-size="11" fill="#3a3e49" textLength="46" lengthAdjust="spacingAndGlyphs">Crawley</text>
<text x="571" y="451" font-size="11" fill="#3a3e49" textLength="54.4" lengthAdjust="spacingAndGlyphs">Salisbury</text>
<text x="648.7" y="453.6" font-size="11" fill="#3a3e49" textLength="55.8" lengthAdjust="spacingAndGlyphs">Winchester</text>
<text x="809" y="453.6" font-size="9.5" fill="#474c57" textLength="45" lengthAdjust="spacingAndGlyphs">Horsham</text>
<text x="446" y="467.6" font-size="9.5" fill="#474c57" textLength="58" lengthAdjust="spacingAndGlyphs">Shaftesbury</text>
<text x="581" y="471" font-size="9.5" fill="#474c57" textLength="35" lengthAdjust="spacingAndGlyphs">Romsey</text>
<text x="435" y="478.6" font-size="9.5" fill="#474c57" textLength="30" lengthAdjust="spacingAndGlyphs">Yeovil</text>
<text x="793.3" y="474.3" font-size="9.5" fill="#474c57" textLength="47.4" lengthAdjust="spacingAndGlyphs">Haywards</text>
<text x="802.3" y="484.3" font-size="9.5" fill="#474c57" textLength="38.4" lengthAdjust="spacingAndGlyphs">Heath</text>
<text x="538.5" y="483.6" font-size="9.5" fill="#474c57" textLength="64" lengthAdjust="spacingAndGlyphs">Fordingbridge</text>
<text x="636" y="487" font-size="12.5" fill="#3a3e49" textLength="91.8" lengthAdjust="spacingAndGlyphs">Southampton</text>
<text x="464" y="491" font-size="9.5" fill="#474c57" textLength="44.4" lengthAdjust="spacingAndGlyphs">Blandford</text>
<text x="480" y="500.3" font-size="9.5" fill="#474c57" textLength="28.4" lengthAdjust="spacingAndGlyphs">Forum</text>
<text x="558.5" y="495.3" font-size="9.5" fill="#474c57" textLength="38.4" lengthAdjust="spacingAndGlyphs">Verwood</text>
<text x="785" y="507" font-size="11" fill="#3a3e49" textLength="50.8" lengthAdjust="spacingAndGlyphs">Brighton</text>
<text x="649.7" y="510.3" font-size="11" fill="#3a3e49" textLength="69" lengthAdjust="spacingAndGlyphs">Portsmouth</text>
<text x="540" y="514.3" font-size="11" fill="#3a3e49" textLength="50.8" lengthAdjust="spacingAndGlyphs">Wimborne</text>
<text x="568" y="524.3" font-size="7.5" fill="#474c57" textLength="16" lengthAdjust="spacingAndGlyphs">BOH</text>
<text x="773" y="523.7" font-size="11" fill="#3a3e49" textLength="53.8" lengthAdjust="spacingAndGlyphs">Worthing</text>
<text x="472.7" y="539.7" font-size="9.5" fill="#474c57" textLength="43.4" lengthAdjust="spacingAndGlyphs">Wareham</text>
<text x="541" y="542" font-size="12.5" fill="#3a3e49" textLength="33" lengthAdjust="spacingAndGlyphs">Poole</text>
<text x="638.7" y="543" font-size="9.5" fill="#6d6a2e" textLength="24" lengthAdjust="spacingAndGlyphs">Isle of</text>
<text x="639.3" y="552.7" font-size="9.5" fill="#6d6a2e" textLength="23.4" lengthAdjust="spacingAndGlyphs">Wight</text>
<text x="464" y="556.4" font-size="11" fill="#3a3e49" textLength="52" lengthAdjust="spacingAndGlyphs">Weymouth</text>
<text x="543.5" y="557" font-size="9.5" fill="#474c57" textLength="40.7" lengthAdjust="spacingAndGlyphs">Swanage</text>
<text x="668.5" y="560.7" font-size="9.5" fill="#474c57" textLength="35" lengthAdjust="spacingAndGlyphs">Ventnor</text>
<text x="468.5" y="572" font-size="9.5" fill="#474c57" textLength="38.7" lengthAdjust="spacingAndGlyphs">Portland</text>
<text x="893.4" y="340.7" font-size="11" fill="#3a3e49" textLength="50" lengthAdjust="spacingAndGlyphs">Romford</text>
<text x="976.9" y="349.4" font-size="11" fill="#3a3e49" textLength="60" lengthAdjust="spacingAndGlyphs">Southend-</text>
<text x="976.9" y="360" font-size="11" fill="#3a3e49" textLength="40" lengthAdjust="spacingAndGlyphs">on-Sea</text>
<text x="863.3" y="356" font-size="9.5" fill="#474c57" textLength="23.4" lengthAdjust="spacingAndGlyphs">Erith</text>
<text x="915" y="356" font-size="9.5" fill="#474c57" textLength="28.4" lengthAdjust="spacingAndGlyphs">Grays</text>
<text x="866.7" y="373.4" font-size="12.5" fill="#3a3e49" textLength="56.8" lengthAdjust="spacingAndGlyphs">Bromley</text>
<text x="1040.3" y="378.4" font-size="9.5" fill="#474c57" textLength="40.7" lengthAdjust="spacingAndGlyphs">Margate</text>
<text x="1093" y="391" font-size="9.5" fill="#474c57" textLength="49" lengthAdjust="spacingAndGlyphs">Ramsgate</text>
<text x="879.4" y="386.8" font-size="9.5" fill="#474c57" textLength="50.8" lengthAdjust="spacingAndGlyphs">Orpington</text>
<text x="981" y="389.5" font-size="9.5" fill="#474c57" textLength="69.4" lengthAdjust="spacingAndGlyphs">Sittingbourne</text>
<text x="881.7" y="403.5" font-size="11" fill="#3a3e49" textLength="61.8" lengthAdjust="spacingAndGlyphs">Maidstone</text>
<text x="977" y="403.5" font-size="9.5" fill="#474c57" textLength="56.8" lengthAdjust="spacingAndGlyphs">Canterbury</text>
<text x="1063.7" y="416" font-size="9.5" fill="#474c57" textLength="20.7" lengthAdjust="spacingAndGlyphs">Deal</text>
<text x="906.7" y="421.8" font-size="9.5" fill="#474c57" textLength="50.8" lengthAdjust="spacingAndGlyphs">Tonbridge</text>
<text x="905" y="443.5" font-size="11" fill="#3a3e49" textLength="60" lengthAdjust="spacingAndGlyphs">Tunbridge</text>
<text x="905" y="455.2" font-size="11" fill="#3a3e49" textLength="31.7" lengthAdjust="spacingAndGlyphs">Wells</text>
<text x="1003.6" y="441.9" font-size="12.5" fill="#3a3e49" textLength="46" lengthAdjust="spacingAndGlyphs">Ashford</text>
<text x="1247.3" y="442.9" font-size="9.5" fill="#474c57" textLength="40" lengthAdjust="spacingAndGlyphs">Koksijde</text>
<text x="993.6" y="454.2" font-size="9.5" fill="#474c57" textLength="55" lengthAdjust="spacingAndGlyphs">Folkestone</text>
<text x="1247.3" y="460.2" font-size="11" fill="#3a3e49" textLength="40" lengthAdjust="spacingAndGlyphs">Dunkirk</text>
<text x="878.4" y="475.3" font-size="9.5" fill="#474c57" textLength="36.7" lengthAdjust="spacingAndGlyphs">Uckfield</text>
<text x="1214" y="473.6" font-size="9.5" fill="#474c57" textLength="36.7" lengthAdjust="spacingAndGlyphs">Grande-</text>
<text x="1218" y="482.6" font-size="9.5" fill="#474c57" textLength="30.4" lengthAdjust="spacingAndGlyphs">Synthe</text>
<text x="1255.7" y="475.3" font-size="9.5" fill="#474c57" textLength="36" lengthAdjust="spacingAndGlyphs">Bergues</text>
<text x="1102" y="479.6" font-size="9.5" fill="#474c57" textLength="41" lengthAdjust="spacingAndGlyphs">Sangatte</text>
<text x="1161.5" y="478.6" font-size="11" fill="#3a3e49" textLength="30" lengthAdjust="spacingAndGlyphs">Calais</text>
<text x="864" y="497" font-size="9.5" fill="#474c57" textLength="30.4" lengthAdjust="spacingAndGlyphs">Lewes</text>
<text x="1164.5" y="498.6" font-size="9.5" fill="#474c57" textLength="30.4" lengthAdjust="spacingAndGlyphs">Guines</text>
<text x="1252.3" y="502" font-size="9.5" fill="#474c57" textLength="45" lengthAdjust="spacingAndGlyphs">Poperinge</text>
<text x="908.4" y="502" font-size="11" fill="#3a3e49" textLength="43.4" lengthAdjust="spacingAndGlyphs">Hastings</text>
<text x="1138" y="510.3" font-size="9.5" fill="#474c57" textLength="40.7" lengthAdjust="spacingAndGlyphs">Marquise</text>
<text x="873.4" y="519.7" font-size="11" fill="#3a3e49" textLength="66.8" lengthAdjust="spacingAndGlyphs">Eastbourne</text>
<text x="1227.3" y="516.3" font-size="9.5" fill="#474c57" textLength="23.4" lengthAdjust="spacingAndGlyphs">Saint-</text>
<text x="1227.3" y="524.7" font-size="9.5" fill="#474c57" textLength="25" lengthAdjust="spacingAndGlyphs">Omer</text>
<text x="1265.7" y="514.7" font-size="9.5" fill="#474c57" textLength="30" lengthAdjust="spacingAndGlyphs">Cassel</text>
<text x="1138" y="522" font-size="9.5" fill="#474c57" textLength="19" lengthAdjust="spacingAndGlyphs">Rety</text>
<text x="1095.4" y="539.7" font-size="9.5" fill="#474c57" textLength="52.8" lengthAdjust="spacingAndGlyphs">Boulogne-</text>
<text x="1103" y="549.7" font-size="9.5" fill="#474c57" textLength="38.4" lengthAdjust="spacingAndGlyphs">sur-Mer</text>
<text x="1158" y="544.4" font-size="9.5" fill="#474c57" textLength="35.7" lengthAdjust="spacingAndGlyphs">Desvres</text>
<text x="1244" y="541.4" font-size="9.5" fill="#474c57" textLength="55" lengthAdjust="spacingAndGlyphs">Hazebrouck</text>
<text x="1214" y="553.7" font-size="9.5" fill="#474c57" textLength="31.7" lengthAdjust="spacingAndGlyphs">Ecques</text>
<text x="1249" y="556.4" font-size="9.5" fill="#474c57" textLength="40" lengthAdjust="spacingAndGlyphs">Merville</text>
<text x="1127" y="578.8" font-size="9.5" fill="#474c57" textLength="33.8" lengthAdjust="spacingAndGlyphs">Étaples</text>
<text x="1247.8" y="575.5" font-size="9.5" fill="#474c57" textLength="40" lengthAdjust="spacingAndGlyphs">Béthune</text>
<text x="1098.3" y="592.6" font-size="9.5" fill="#474c57" textLength="47" lengthAdjust="spacingAndGlyphs">Merlimont</text>
<text x="1227.4" y="592.6" font-size="9.5" fill="#474c57" textLength="43.4" lengthAdjust="spacingAndGlyphs">Bruay-la-</text>
<text x="1227.4" y="602.4" font-size="9.5" fill="#474c57" textLength="42.7" lengthAdjust="spacingAndGlyphs">Buissière</text>
<text x="1120.3" y="603.4" font-size="9.5" fill="#474c57" textLength="25" lengthAdjust="spacingAndGlyphs">Berck</text>
<text x="1241.2" y="615.6" font-size="9.5" fill="#474c57" textLength="45" lengthAdjust="spacingAndGlyphs">Saint-Pol-</text>
<text x="1241.2" y="624.8" font-size="9.5" fill="#474c57" textLength="55" lengthAdjust="spacingAndGlyphs">sur-Ternoise</text>
<text x="1216" y="641.9" font-size="9.5" fill="#474c57" textLength="33.5" lengthAdjust="spacingAndGlyphs">Frévent</text>
<text x="1241.2" y="661.6" font-size="9.5" fill="#474c57" textLength="40" lengthAdjust="spacingAndGlyphs">Doullens</text>
<text x="1113" y="674" font-size="9.5" fill="#474c57" textLength="42" lengthAdjust="spacingAndGlyphs">Abbeville</text>
<text x="1034.2" y="684.6" font-size="9.5" fill="#474c57" textLength="46" lengthAdjust="spacingAndGlyphs">Le Tréport</text>
<text x="1092.7" y="686.2" font-size="9.5" fill="#474c57" textLength="11.2" lengthAdjust="spacingAndGlyphs">Eu</text>
<text x="1113" y="684.6" font-size="9.5" fill="#474c57" textLength="32.8" lengthAdjust="spacingAndGlyphs">Friville-</text>
<text x="1113" y="693.8" font-size="9.5" fill="#474c57" textLength="46.7" lengthAdjust="spacingAndGlyphs">Escarbotin</text>
<text x="1249.4" y="696" font-size="9.5" fill="#474c57" textLength="32" lengthAdjust="spacingAndGlyphs">Albert</text>
<text x="1011.8" y="697.5" font-size="9.5" fill="#474c57" textLength="60" lengthAdjust="spacingAndGlyphs">Criel-sur-Mer</text>
</g>
<g font-family="Liberation Sans" stroke-width="0.35">
<text x="180" y="95.5" font-size="9.5" fill="#474c57" stroke="#474c57" textLength="56" lengthAdjust="spacingAndGlyphs">Machynlleth</text>
<text x="17" y="661" font-size="9.5" fill="#474c57" stroke="#474c57" textLength="42" lengthAdjust="spacingAndGlyphs">Plymouth</text>
<text x="322" y="97" font-size="9.5" fill="#474c57" stroke="#474c57" textLength="58" lengthAdjust="spacingAndGlyphs">Montgomery</text>
<text x="543.5" y="92.7" font-size="12.5" fill="#3a3e49" stroke="#3a3e49" textLength="48.4" lengthAdjust="spacingAndGlyphs">Walsall</text>
<text x="527.5" y="111.7" font-size="12.5" fill="#3a3e49" stroke="#3a3e49" textLength="46" lengthAdjust="spacingAndGlyphs">Dudley</text>
<text x="446" y="116" font-size="9.5" fill="#474c57" stroke="#474c57" textLength="60" lengthAdjust="spacingAndGlyphs">Kingswinford</text>
<text x="556" y="131.7" font-size="15" fill="#3a3e49" stroke="#3a3e49" textLength="98.5" lengthAdjust="spacingAndGlyphs">Birmingham</text>
<text x="453" y="132.4" font-size="9.5" fill="#474c57" stroke="#474c57" textLength="56" lengthAdjust="spacingAndGlyphs">Stourbridge</text>
<text x="427" y="147.8" font-size="9.5" fill="#474c57" stroke="#474c57" textLength="66" lengthAdjust="spacingAndGlyphs">Kidderminster</text>
<text x="640.3" y="106" font-size="9.5" fill="#474c57" stroke="#474c57" textLength="41.7" lengthAdjust="spacingAndGlyphs">Hinckley</text>
<text x="685.4" y="139" font-size="11" fill="#3a3e49" stroke="#3a3e49" textLength="54" lengthAdjust="spacingAndGlyphs">Kettering</text>
<text x="657.7" y="153.5" font-size="12.5" fill="#3a3e49" stroke="#3a3e49" textLength="37.7" lengthAdjust="spacingAndGlyphs">Rugby</text>
<text x="757" y="155" font-size="11" fill="#3a3e49" stroke="#3a3e49" textLength="69.5" lengthAdjust="spacingAndGlyphs">Huntingdon</text>
<text x="548.5" y="161.8" font-size="9.5" fill="#474c57" stroke="#474c57" textLength="43.4" lengthAdjust="spacingAndGlyphs">Redditch</text>
<text x="465.7" y="170.8" font-size="9.5" fill="#474c57" stroke="#474c57" textLength="42.7" lengthAdjust="spacingAndGlyphs">Droitwich</text>
<text x="674.4" y="172.5" font-size="9.5" fill="#474c57" stroke="#474c57" textLength="41" lengthAdjust="spacingAndGlyphs">Daventry</text>
<text x="748.8" y="169.5" font-size="9.5" fill="#474c57" stroke="#474c57" textLength="80" lengthAdjust="spacingAndGlyphs">Wellingborough</text>
<text x="582" y="176.8" font-size="11" fill="#3a3e49" stroke="#3a3e49" textLength="41" lengthAdjust="spacingAndGlyphs">Warwick</text>
<text x="437" y="188.5" font-size="11" fill="#3a3e49" stroke="#3a3e49" textLength="60" lengthAdjust="spacingAndGlyphs">Worcester</text>
<text x="773" y="185" font-size="9.5" fill="#474c57" stroke="#474c57" textLength="42.4" lengthAdjust="spacingAndGlyphs">St Neots</text>
<text x="748" y="198.5" font-size="9.5" fill="#474c57" stroke="#474c57" textLength="26" lengthAdjust="spacingAndGlyphs">Olney</text>
<text x="788" y="200" font-size="11" fill="#3a3e49" stroke="#3a3e49" textLength="46.7" lengthAdjust="spacingAndGlyphs">Bedford</text>
<text x="450" y="207.5" font-size="9.5" fill="#474c57" stroke="#474c57" textLength="30" lengthAdjust="spacingAndGlyphs">Great</text>
<text x="436" y="217.6" font-size="9.5" fill="#474c57" stroke="#474c57" textLength="44" lengthAdjust="spacingAndGlyphs">Malvern</text>
<text x="546.8" y="212.5" font-size="9.5" fill="#474c57" stroke="#474c57" textLength="43.4" lengthAdjust="spacingAndGlyphs">Evesham</text>
<text x="652" y="203.5" font-size="9.5" fill="#474c57" stroke="#474c57" textLength="45" lengthAdjust="spacingAndGlyphs">Towcester</text>
<text x="800" y="211" font-size="9.5" fill="#474c57" stroke="#474c57" textLength="27.4" lengthAdjust="spacingAndGlyphs">Sandy</text>
<text x="645.3" y="218.6" font-size="9.5" fill="#474c57" stroke="#474c57" textLength="41" lengthAdjust="spacingAndGlyphs">Banbury</text>
<text x="457.4" y="236" font-size="9.5" fill="#474c57" stroke="#474c57" textLength="52.8" lengthAdjust="spacingAndGlyphs">Tewkesbury</text>
<text x="786" y="233.6" font-size="9.5" fill="#474c57" stroke="#474c57" textLength="39.4" lengthAdjust="spacingAndGlyphs">Shefford</text>
<text x="815.6" y="244.6" font-size="9.5" fill="#474c57" stroke="#474c57" textLength="35" lengthAdjust="spacingAndGlyphs">Hitchin</text>
<text x="526.8" y="257" font-size="11" fill="#3a3e49" stroke="#3a3e49" textLength="70" lengthAdjust="spacingAndGlyphs">Cheltenham</text>
<text x="431" y="265.3" font-size="11" fill="#3a3e49" stroke="#3a3e49" textLength="62" lengthAdjust="spacingAndGlyphs">Gloucester</text>
<text x="794.6" y="260.3" font-size="11" fill="#3a3e49" stroke="#3a3e49" textLength="33.7" lengthAdjust="spacingAndGlyphs">Luton</text>
<text x="668" y="277" font-size="11" fill="#3a3e49" stroke="#3a3e49" textLength="57.4" lengthAdjust="spacingAndGlyphs">Aylesbury</text>
<text x="465" y="280.3" font-size="9.5" fill="#474c57" stroke="#474c57" textLength="45" lengthAdjust="spacingAndGlyphs">Newnham</text>
<text x="658.7" y="291" font-size="11" fill="#3a3e49" stroke="#3a3e49" textLength="40" lengthAdjust="spacingAndGlyphs">Oxford</text>
<text x="582" y="284.3" font-size="9.5" fill="#474c57" stroke="#474c57" textLength="34.4" lengthAdjust="spacingAndGlyphs">Witney</text>
<text x="747.8" y="292.7" font-size="11" fill="#3a3e49" stroke="#3a3e49" textLength="55.4" lengthAdjust="spacingAndGlyphs">St Albans</text>
<text x="792" y="277" font-size="8" fill="#474c57" stroke="#474c57" textLength="15" lengthAdjust="spacingAndGlyphs">LTN</text>
<text x="790.5" y="362.5" font-size="7.5" fill="#474c57" stroke="#474c57" textLength="16" lengthAdjust="spacingAndGlyphs">LHR</text>
<text x="839" y="436.8" font-size="7.5" fill="#474c57" stroke="#474c57" textLength="17" lengthAdjust="spacingAndGlyphs">LGW</text>
<text x="463.4" y="294.4" font-size="9.5" fill="#474c57" stroke="#474c57" textLength="33.4" lengthAdjust="spacingAndGlyphs">Stroud</text>
<text x="545" y="300.4" font-size="9.5" fill="#474c57" stroke="#474c57" textLength="56.8" lengthAdjust="spacingAndGlyphs">Cirencester</text>
<text x="708.8" y="310.4" font-size="11" fill="#3a3e49" stroke="#3a3e49" textLength="27.7" lengthAdjust="spacingAndGlyphs">High</text>
<text x="780" y="313.7" font-size="12.5" fill="#3a3e49" stroke="#3a3e49" textLength="44" lengthAdjust="spacingAndGlyphs">Barnet</text>
<text x="479.4" y="307" font-size="9.5" fill="#474c57" stroke="#474c57" textLength="33.4" lengthAdjust="spacingAndGlyphs">Dursley</text>
<text x="555" y="315.4" font-size="9.5" fill="#474c57" stroke="#474c57" textLength="45.7" lengthAdjust="spacingAndGlyphs">Faringdon</text>
<text x="681" y="320.3" font-size="11" fill="#3a3e49" stroke="#3a3e49" textLength="54.4" lengthAdjust="spacingAndGlyphs">Wycombe</text>
<text x="876.7" y="102.7" font-size="9.5" fill="#474c57" stroke="#474c57" textLength="26.7" lengthAdjust="spacingAndGlyphs">March</text>
<text x="923.4" y="96.7" font-size="9.5" fill="#474c57" stroke="#474c57" textLength="45" lengthAdjust="spacingAndGlyphs">Downham</text>
<text x="923.4" y="105.7" font-size="9.5" fill="#474c57" stroke="#474c57" textLength="31.7" lengthAdjust="spacingAndGlyphs">Market</text>
<text x="979.5" y="98.4" font-size="9.5" fill="#474c57" stroke="#474c57" textLength="59" lengthAdjust="spacingAndGlyphs">Wymondham</text>
<text x="994.6" y="109" font-size="9.5" fill="#474c57" stroke="#474c57" textLength="60" lengthAdjust="spacingAndGlyphs">Attleborough</text>
<text x="905" y="140" font-size="11" fill="#3a3e49" stroke="#3a3e49" textLength="14.4" lengthAdjust="spacingAndGlyphs">Ely</text>
<text x="983" y="135" font-size="11" fill="#3a3e49" stroke="#3a3e49" textLength="42.4" lengthAdjust="spacingAndGlyphs">Thetford</text>
<text x="1042" y="145" font-size="9.5" fill="#474c57" stroke="#474c57" textLength="18.4" lengthAdjust="spacingAndGlyphs">Diss</text>
<text x="1048.6" y="157.5" font-size="9.5" fill="#474c57" stroke="#474c57" textLength="15" lengthAdjust="spacingAndGlyphs">Eye</text>
<text x="977.5" y="164.5" font-size="11" fill="#3a3e49" stroke="#3a3e49" textLength="36" lengthAdjust="spacingAndGlyphs">Bury St</text>
<text x="977.5" y="174.5" font-size="11" fill="#3a3e49" stroke="#3a3e49" textLength="45.4" lengthAdjust="spacingAndGlyphs">Edmunds</text>
<text x="1107" y="165.8" font-size="9.5" fill="#474c57" stroke="#474c57" textLength="48.4" lengthAdjust="spacingAndGlyphs">Southwold</text>
<text x="880" y="183.5" font-size="12.5" fill="#3a3e49" stroke="#3a3e49" textLength="64.4" lengthAdjust="spacingAndGlyphs">Cambridge</text>
<text x="1103" y="182.8" font-size="9.5" fill="#474c57" stroke="#474c57" textLength="61.4" lengthAdjust="spacingAndGlyphs">Saxmundham</text>
<text x="1024" y="189" font-size="11" fill="#3a3e49" stroke="#3a3e49" textLength="59.4" lengthAdjust="spacingAndGlyphs">Stowmarket</text>
<text x="1099" y="193.5" font-size="9.5" fill="#474c57" stroke="#474c57" textLength="33" lengthAdjust="spacingAndGlyphs">Leiston</text>
<text x="1094.7" y="207" font-size="9.5" fill="#474c57" stroke="#474c57" textLength="46.7" lengthAdjust="spacingAndGlyphs">Aldeburgh</text>
<text x="888.4" y="213.5" font-size="9.5" fill="#474c57" stroke="#474c57" textLength="40" lengthAdjust="spacingAndGlyphs">Haverhill</text>
<text x="1024" y="218.6" font-size="12.5" fill="#3a3e49" stroke="#3a3e49" textLength="43.4" lengthAdjust="spacingAndGlyphs">Ipswich</text>
<text x="901.7" y="235.3" font-size="9.5" fill="#474c57" stroke="#474c57" textLength="32.4" lengthAdjust="spacingAndGlyphs">Saffron</text>
<text x="901.7" y="244.6" font-size="9.5" fill="#474c57" stroke="#474c57" textLength="32.7" lengthAdjust="spacingAndGlyphs">Walden</text>
<text x="1028.6" y="244.3" font-size="9.5" fill="#474c57" stroke="#474c57" textLength="47.4" lengthAdjust="spacingAndGlyphs">Felixstowe</text>
<text x="902.7" y="263" font-size="11" fill="#3a3e49" stroke="#3a3e49" textLength="45.7" lengthAdjust="spacingAndGlyphs">Braintree</text>
<text x="1009" y="262" font-size="12.5" fill="#3a3e49" stroke="#3a3e49" textLength="61.8" lengthAdjust="spacingAndGlyphs">Colchester</text>
<text x="868.3" y="273.6" font-size="9.5" fill="#474c57" stroke="#474c57" textLength="36.7" lengthAdjust="spacingAndGlyphs">Bishop's</text>
<text x="868.3" y="282.7" font-size="9.5" fill="#474c57" stroke="#474c57" textLength="36.7" lengthAdjust="spacingAndGlyphs">Stortford</text>
<text x="928.4" y="281.3" font-size="9.5" fill="#474c57" stroke="#474c57" textLength="32.7" lengthAdjust="spacingAndGlyphs">Witham</text>
<text x="1003" y="287" font-size="11" fill="#3a3e49" stroke="#3a3e49" textLength="40.7" lengthAdjust="spacingAndGlyphs">Clacton-</text>
<text x="1010" y="297" font-size="11" fill="#3a3e49" stroke="#3a3e49" textLength="34.4" lengthAdjust="spacingAndGlyphs">on-Sea</text>
<text x="867.3" y="297" font-size="12.5" fill="#3a3e49" stroke="#3a3e49" textLength="67.8" lengthAdjust="spacingAndGlyphs">Chelmsford</text>
<text x="880" y="322.7" font-size="11" fill="#3a3e49" stroke="#3a3e49" textLength="50" lengthAdjust="spacingAndGlyphs">Brentwood</text>
<text x="574.2" y="336.7" font-size="11" fill="#3a3e49" stroke="#3a3e49" textLength="50.4" lengthAdjust="spacingAndGlyphs">Swindon</text>
<text x="775" y="349.4" font-size="14.5" fill="#3a3e49" stroke="#3a3e49" textLength="60.8" lengthAdjust="spacingAndGlyphs">London</text>
<text x="679.7" y="346.7" font-size="9.5" fill="#474c57" stroke="#474c57" textLength="60.8" lengthAdjust="spacingAndGlyphs">Maidenhead</text>
<text x="443" y="360.7" font-size="12.5" fill="#3a3e49" stroke="#3a3e49" textLength="45" lengthAdjust="spacingAndGlyphs">Bristol</text>
<text x="522.8" y="364.4" font-size="9.5" fill="#474c57" stroke="#474c57" textLength="24.7" lengthAdjust="spacingAndGlyphs">Calne</text>
<text x="551.2" y="368.4" font-size="9.5" fill="#474c57" stroke="#474c57" textLength="58.4" lengthAdjust="spacingAndGlyphs">Marlborough</text>
<text x="654.7" y="361.7" font-size="11" fill="#3a3e49" stroke="#3a3e49" textLength="47.4" lengthAdjust="spacingAndGlyphs">Reading</text>
<text x="480.7" y="378.4" font-size="11" fill="#3a3e49" stroke="#3a3e49" textLength="26" lengthAdjust="spacingAndGlyphs">Bath</text>
<text x="688.7" y="377.4" font-size="9.5" fill="#474c57" stroke="#474c57" textLength="46.7" lengthAdjust="spacingAndGlyphs">Bracknell</text>
<text x="784" y="380" font-size="12.5" fill="#3a3e49" stroke="#3a3e49" textLength="56" lengthAdjust="spacingAndGlyphs">Croydon</text>
<text x="539.5" y="386.8" font-size="9.5" fill="#474c57" stroke="#474c57" textLength="33.4" lengthAdjust="spacingAndGlyphs">Devizes</text>
<text x="686" y="390.8" font-size="9.5" fill="#474c57" stroke="#474c57" textLength="52.8" lengthAdjust="spacingAndGlyphs">Camberley</text>
<text x="443" y="394" font-size="9.5" fill="#474c57" stroke="#474c57" textLength="57" lengthAdjust="spacingAndGlyphs">Trowbridge</text>
<text x="772" y="399" font-size="11" fill="#3a3e49" stroke="#3a3e49" textLength="42.4" lengthAdjust="spacingAndGlyphs">Woking</text>
<text x="649.7" y="405" font-size="11" fill="#3a3e49" stroke="#3a3e49" textLength="70.8" lengthAdjust="spacingAndGlyphs">Basingstoke</text>
<text x="466.7" y="406.8" font-size="9.5" fill="#474c57" stroke="#474c57" textLength="46" lengthAdjust="spacingAndGlyphs">Radstock</text>
<text x="770.5" y="412.8" font-size="11" fill="#3a3e49" stroke="#3a3e49" textLength="55" lengthAdjust="spacingAndGlyphs">Guildford</text>
<text x="486.7" y="420.8" font-size="9.5" fill="#474c57" stroke="#474c57" textLength="28.4" lengthAdjust="spacingAndGlyphs">Frome</text>
<text x="577.6" y="420.2" font-size="11" fill="#3a3e49" stroke="#3a3e49" textLength="41" lengthAdjust="spacingAndGlyphs">Andover</text>
<text x="685.4" y="419" font-size="9.5" fill="#474c57" stroke="#474c57" textLength="42.4" lengthAdjust="spacingAndGlyphs">Farnham</text>
<text x="781" y="440.2" font-size="11" fill="#3a3e49" stroke="#3a3e49" textLength="46" lengthAdjust="spacingAndGlyphs">Crawley</text>
<text x="571" y="451" font-size="11" fill="#3a3e49" stroke="#3a3e49" textLength="54.4" lengthAdjust="spacingAndGlyphs">Salisbury</text>
<text x="648.7" y="453.6" font-size="11" fill="#3a3e49" stroke="#3a3e49" textLength="55.8" lengthAdjust="spacingAndGlyphs">Winchester</text>
<text x="809" y="453.6" font-size="9.5" fill="#474c57" stroke="#474c57" textLength="45" lengthAdjust="spacingAndGlyphs">Horsham</text>
<text x="446" y="467.6" font-size="9.5" fill="#474c57" stroke="#474c57" textLength="58" lengthAdjust="spacingAndGlyphs">Shaftesbury</text>
<text x="581" y="471" font-size="9.5" fill="#474c57" stroke="#474c57" textLength="35" lengthAdjust="spacingAndGlyphs">Romsey</text>
<text x="435" y="478.6" font-size="9.5" fill="#474c57" stroke="#474c57" textLength="30" lengthAdjust="spacingAndGlyphs">Yeovil</text>
<text x="793.3" y="474.3" font-size="9.5" fill="#474c57" stroke="#474c57" textLength="47.4" lengthAdjust="spacingAndGlyphs">Haywards</text>
<text x="802.3" y="484.3" font-size="9.5" fill="#474c57" stroke="#474c57" textLength="38.4" lengthAdjust="spacingAndGlyphs">Heath</text>
<text x="538.5" y="483.6" font-size="9.5" fill="#474c57" stroke="#474c57" textLength="64" lengthAdjust="spacingAndGlyphs">Fordingbridge</text>
<text x="636" y="487" font-size="12.5" fill="#3a3e49" stroke="#3a3e49" textLength="91.8" lengthAdjust="spacingAndGlyphs">Southampton</text>
<text x="464" y="491" font-size="9.5" fill="#474c57" stroke="#474c57" textLength="44.4" lengthAdjust="spacingAndGlyphs">Blandford</text>
<text x="480" y="500.3" font-size="9.5" fill="#474c57" stroke="#474c57" textLength="28.4" lengthAdjust="spacingAndGlyphs">Forum</text>
<text x="558.5" y="495.3" font-size="9.5" fill="#474c57" stroke="#474c57" textLength="38.4" lengthAdjust="spacingAndGlyphs">Verwood</text>
<text x="785" y="507" font-size="11" fill="#3a3e49" stroke="#3a3e49" textLength="50.8" lengthAdjust="spacingAndGlyphs">Brighton</text>
<text x="649.7" y="510.3" font-size="11" fill="#3a3e49" stroke="#3a3e49" textLength="69" lengthAdjust="spacingAndGlyphs">Portsmouth</text>
<text x="540" y="514.3" font-size="11" fill="#3a3e49" stroke="#3a3e49" textLength="50.8" lengthAdjust="spacingAndGlyphs">Wimborne</text>
<text x="568" y="524.3" font-size="7.5" fill="#474c57" stroke="#474c57" textLength="16" lengthAdjust="spacingAndGlyphs">BOH</text>
<text x="773" y="523.7" font-size="11" fill="#3a3e49" stroke="#3a3e49" textLength="53.8" lengthAdjust="spacingAndGlyphs">Worthing</text>
<text x="472.7" y="539.7" font-size="9.5" fill="#474c57" stroke="#474c57" textLength="43.4" lengthAdjust="spacingAndGlyphs">Wareham</text>
<text x="541" y="542" font-size="12.5" fill="#3a3e49" stroke="#3a3e49" textLength="33" lengthAdjust="spacingAndGlyphs">Poole</text>
<text x="638.7" y="543" font-size="9.5" fill="#6d6a2e" stroke="#6d6a2e" textLength="24" lengthAdjust="spacingAndGlyphs">Isle of</text>
<text x="639.3" y="552.7" font-size="9.5" fill="#6d6a2e" stroke="#6d6a2e" textLength="23.4" lengthAdjust="spacingAndGlyphs">Wight</text>
<text x="464" y="556.4" font-size="11" fill="#3a3e49" stroke="#3a3e49" textLength="52" lengthAdjust="spacingAndGlyphs">Weymouth</text>
<text x="543.5" y="557" font-size="9.5" fill="#474c57" stroke="#474c57" textLength="40.7" lengthAdjust="spacingAndGlyphs">Swanage</text>
<text x="668.5" y="560.7" font-size="9.5" fill="#474c57" stroke="#474c57" textLength="35" lengthAdjust="spacingAndGlyphs">Ventnor</text>
<text x="468.5" y="572" font-size="9.5" fill="#474c57" stroke="#474c57" textLength="38.7" lengthAdjust="spacingAndGlyphs">Portland</text>
<text x="893.4" y="340.7" font-size="11" fill="#3a3e49" stroke="#3a3e49" textLength="50" lengthAdjust="spacingAndGlyphs">Romford</text>
<text x="976.9" y="349.4" font-size="11" fill="#3a3e49" stroke="#3a3e49" textLength="60" lengthAdjust="spacingAndGlyphs">Southend-</text>
<text x="976.9" y="360" font-size="11" fill="#3a3e49" stroke="#3a3e49" textLength="40" lengthAdjust="spacingAndGlyphs">on-Sea</text>
<text x="863.3" y="356" font-size="9.5" fill="#474c57" stroke="#474c57" textLength="23.4" lengthAdjust="spacingAndGlyphs">Erith</text>
<text x="915" y="356" font-size="9.5" fill="#474c57" stroke="#474c57" textLength="28.4" lengthAdjust="spacingAndGlyphs">Grays</text>
<text x="866.7" y="373.4" font-size="12.5" fill="#3a3e49" stroke="#3a3e49" textLength="56.8" lengthAdjust="spacingAndGlyphs">Bromley</text>
<text x="1040.3" y="378.4" font-size="9.5" fill="#474c57" stroke="#474c57" textLength="40.7" lengthAdjust="spacingAndGlyphs">Margate</text>
<text x="1093" y="391" font-size="9.5" fill="#474c57" stroke="#474c57" textLength="49" lengthAdjust="spacingAndGlyphs">Ramsgate</text>
<text x="879.4" y="386.8" font-size="9.5" fill="#474c57" stroke="#474c57" textLength="50.8" lengthAdjust="spacingAndGlyphs">Orpington</text>
<text x="981" y="389.5" font-size="9.5" fill="#474c57" stroke="#474c57" textLength="69.4" lengthAdjust="spacingAndGlyphs">Sittingbourne</text>
<text x="881.7" y="403.5" font-size="11" fill="#3a3e49" stroke="#3a3e49" textLength="61.8" lengthAdjust="spacingAndGlyphs">Maidstone</text>
<text x="977" y="403.5" font-size="9.5" fill="#474c57" stroke="#474c57" textLength="56.8" lengthAdjust="spacingAndGlyphs">Canterbury</text>
<text x="1063.7" y="416" font-size="9.5" fill="#474c57" stroke="#474c57" textLength="20.7" lengthAdjust="spacingAndGlyphs">Deal</text>
<text x="906.7" y="421.8" font-size="9.5" fill="#474c57" stroke="#474c57" textLength="50.8" lengthAdjust="spacingAndGlyphs">Tonbridge</text>
<text x="905" y="443.5" font-size="11" fill="#3a3e49" stroke="#3a3e49" textLength="60" lengthAdjust="spacingAndGlyphs">Tunbridge</text>
<text x="905" y="455.2" font-size="11" fill="#3a3e49" stroke="#3a3e49" textLength="31.7" lengthAdjust="spacingAndGlyphs">Wells</text>
<text x="1003.6" y="441.9" font-size="12.5" fill="#3a3e49" stroke="#3a3e49" textLength="46" lengthAdjust="spacingAndGlyphs">Ashford</text>
<text x="1247.3" y="442.9" font-size="9.5" fill="#474c57" stroke="#474c57" textLength="40" lengthAdjust="spacingAndGlyphs">Koksijde</text>
<text x="993.6" y="454.2" font-size="9.5" fill="#474c57" stroke="#474c57" textLength="55" lengthAdjust="spacingAndGlyphs">Folkestone</text>
<text x="1247.3" y="460.2" font-size="11" fill="#3a3e49" stroke="#3a3e49" textLength="40" lengthAdjust="spacingAndGlyphs">Dunkirk</text>
<text x="878.4" y="475.3" font-size="9.5" fill="#474c57" stroke="#474c57" textLength="36.7" lengthAdjust="spacingAndGlyphs">Uckfield</text>
<text x="1214" y="473.6" font-size="9.5" fill="#474c57" stroke="#474c57" textLength="36.7" lengthAdjust="spacingAndGlyphs">Grande-</text>
<text x="1218" y="482.6" font-size="9.5" fill="#474c57" stroke="#474c57" textLength="30.4" lengthAdjust="spacingAndGlyphs">Synthe</text>
<text x="1255.7" y="475.3" font-size="9.5" fill="#474c57" stroke="#474c57" textLength="36" lengthAdjust="spacingAndGlyphs">Bergues</text>
<text x="1102" y="479.6" font-size="9.5" fill="#474c57" stroke="#474c57" textLength="41" lengthAdjust="spacingAndGlyphs">Sangatte</text>
<text x="1161.5" y="478.6" font-size="11" fill="#3a3e49" stroke="#3a3e49" textLength="30" lengthAdjust="spacingAndGlyphs">Calais</text>
<text x="864" y="497" font-size="9.5" fill="#474c57" stroke="#474c57" textLength="30.4" lengthAdjust="spacingAndGlyphs">Lewes</text>
<text x="1164.5" y="498.6" font-size="9.5" fill="#474c57" stroke="#474c57" textLength="30.4" lengthAdjust="spacingAndGlyphs">Guines</text>
<text x="1252.3" y="502" font-size="9.5" fill="#474c57" stroke="#474c57" textLength="45" lengthAdjust="spacingAndGlyphs">Poperinge</text>
<text x="908.4" y="502" font-size="11" fill="#3a3e49" stroke="#3a3e49" textLength="43.4" lengthAdjust="spacingAndGlyphs">Hastings</text>
<text x="1138" y="510.3" font-size="9.5" fill="#474c57" stroke="#474c57" textLength="40.7" lengthAdjust="spacingAndGlyphs">Marquise</text>
<text x="873.4" y="519.7" font-size="11" fill="#3a3e49" stroke="#3a3e49" textLength="66.8" lengthAdjust="spacingAndGlyphs">Eastbourne</text>
<text x="1227.3" y="516.3" font-size="9.5" fill="#474c57" stroke="#474c57" textLength="23.4" lengthAdjust="spacingAndGlyphs">Saint-</text>
<text x="1227.3" y="524.7" font-size="9.5" fill="#474c57" stroke="#474c57" textLength="25" lengthAdjust="spacingAndGlyphs">Omer</text>
<text x="1265.7" y="514.7" font-size="9.5" fill="#474c57" stroke="#474c57" textLength="30" lengthAdjust="spacingAndGlyphs">Cassel</text>
<text x="1138" y="522" font-size="9.5" fill="#474c57" stroke="#474c57" textLength="19" lengthAdjust="spacingAndGlyphs">Rety</text>
<text x="1095.4" y="539.7" font-size="9.5" fill="#474c57" stroke="#474c57" textLength="52.8" lengthAdjust="spacingAndGlyphs">Boulogne-</text>
<text x="1103" y="549.7" font-size="9.5" fill="#474c57" stroke="#474c57" textLength="38.4" lengthAdjust="spacingAndGlyphs">sur-Mer</text>
<text x="1158" y="544.4" font-size="9.5" fill="#474c57" stroke="#474c57" textLength="35.7" lengthAdjust="spacingAndGlyphs">Desvres</text>
<text x="1244" y="541.4" font-size="9.5" fill="#474c57" stroke="#474c57" textLength="55" lengthAdjust="spacingAndGlyphs">Hazebrouck</text>
<text x="1214" y="553.7" font-size="9.5" fill="#474c57" stroke="#474c57" textLength="31.7" lengthAdjust="spacingAndGlyphs">Ecques</text>
<text x="1249" y="556.4" font-size="9.5" fill="#474c57" stroke="#474c57" textLength="40" lengthAdjust="spacingAndGlyphs">Merville</text>
<text x="1127" y="578.8" font-size="9.5" fill="#474c57" stroke="#474c57" textLength="33.8" lengthAdjust="spacingAndGlyphs">Étaples</text>
<text x="1247.8" y="575.5" font-size="9.5" fill="#474c57" stroke="#474c57" textLength="40" lengthAdjust="spacingAndGlyphs">Béthune</text>
<text x="1098.3" y="592.6" font-size="9.5" fill="#474c57" stroke="#474c57" textLength="47" lengthAdjust="spacingAndGlyphs">Merlimont</text>
<text x="1227.4" y="592.6" font-size="9.5" fill="#474c57" stroke="#474c57" textLength="43.4" lengthAdjust="spacingAndGlyphs">Bruay-la-</text>
<text x="1227.4" y="602.4" font-size="9.5" fill="#474c57" stroke="#474c57" textLength="42.7" lengthAdjust="spacingAndGlyphs">Buissière</text>
<text x="1120.3" y="603.4" font-size="9.5" fill="#474c57" stroke="#474c57" textLength="25" lengthAdjust="spacingAndGlyphs">Berck</text>
<text x="1241.2" y="615.6" font-size="9.5" fill="#474c57" stroke="#474c57" textLength="45" lengthAdjust="spacingAndGlyphs">Saint-Pol-</text>
<text x="1241.2" y="624.8" font-size="9.5" fill="#474c57" stroke="#474c57" textLength="55" lengthAdjust="spacingAndGlyphs">sur-Ternoise</text>
<text x="1216" y="641.9" font-size="9.5" fill="#474c57" stroke="#474c57" textLength="33.5" lengthAdjust="spacingAndGlyphs">Frévent</text>
<text x="1241.2" y="661.6" font-size="9.5" fill="#474c57" stroke="#474c57" textLength="40" lengthAdjust="spacingAndGlyphs">Doullens</text>
<text x="1113" y="674" font-size="9.5" fill="#474c57" stroke="#474c57" textLength="42" lengthAdjust="spacingAndGlyphs">Abbeville</text>
<text x="1034.2" y="684.6" font-size="9.5" fill="#474c57" stroke="#474c57" textLength="46" lengthAdjust="spacingAndGlyphs">Le Tréport</text>
<text x="1092.7" y="686.2" font-size="9.5" fill="#474c57" stroke="#474c57" textLength="11.2" lengthAdjust="spacingAndGlyphs">Eu</text>
<text x="1113" y="684.6" font-size="9.5" fill="#474c57" stroke="#474c57" textLength="32.8" lengthAdjust="spacingAndGlyphs">Friville-</text>
<text x="1113" y="693.8" font-size="9.5" fill="#474c57" stroke="#474c57" textLength="46.7" lengthAdjust="spacingAndGlyphs">Escarbotin</text>
<text x="1249.4" y="696" font-size="9.5" fill="#474c57" stroke="#474c57" textLength="32" lengthAdjust="spacingAndGlyphs">Albert</text>
<text x="1011.8" y="697.5" font-size="9.5" fill="#474c57" stroke="#474c57" textLength="60" lengthAdjust="spacingAndGlyphs">Criel-sur-Mer</text>
</g><rect x="683.6" y="264.6" width="251" height="129.6" fill="#3d56a0" fill-opacity=".41" stroke="#3d56a0" stroke-width="2.6" stroke-dasharray="7.5 3.3"/></svg></div>
<div id="mapshade" class="abs"></div><div id="footer" class="abs"></div>
<div id="panel" class="abs">
<div class="abs" style="left:0;top:0;width:36px;height:546px;background:#fff;border-right:1px solid #ececec"></div>
<div class="abs" style="left:36px;top:0;width:356px;height:31px;background:#fff;border-bottom:1px solid #e6e6e6"></div>
<svg style="left:12px;top:11px" width="12" height="10" viewBox="0 0 12 10"><g fill="#222"><rect x="0" y="0.2" width="12" height="1.6"/><rect x="0" y="4.2" width="12" height="1.6"/><rect x="0" y="8.2" width="12" height="1.6"/></g></svg>
<svg style="left:13px;top:43px" width="10" height="10" viewBox="0 0 10 10"><path d="M5 0c1.6 0 2.4 1.2 2.4 2.8S6.6 6 6.2 6.5C8 7 9.7 7.8 10 9.5V10H0v-.5C.3 7.8 2 7 3.8 6.5 3.4 6 2.6 4.4 2.6 2.8S3.4 0 5 0z" fill="#222"/></svg>
<svg style="left:12px;top:75px" width="12" height="9" viewBox="0 0 12 9"><g fill="#222"><path d="M4 0h4v1.5H7.2V.8H4.8v.7H4z"/><rect x="0" y="1.6" width="12" height="3.2"/><rect x="0" y="5.4" width="12" height="3.6"/></g></svg>
<svg style="left:13px;top:106px" width="10" height="10" viewBox="0 0 10 10"><path d="M0 1.2l3-1.2 4 1.2 3-1.2v8.8L7 10 3 8.8 0 10z" fill="#222"/><path d="M3.3 1v7.8M6.7 2v7.8" stroke="#fff" stroke-width=".9"/></svg>
<div class="abs" style="left:0;top:514px;width:36px;height:32px;background:#3fb4e3"></div>
<svg style="left:11.5px;top:523.5px" width="13" height="13" viewBox="-6.5 -6.5 13 13"><g fill="#fff"><circle r="4.2"/><rect x="-1.3" y="-6.3" width="2.6" height="3" transform="rotate(0)"/><rect x="-1.3" y="-6.3" width="2.6" height="3" transform="rotate(45)"/><rect x="-1.3" y="-6.3" width="2.6" height="3" transform="rotate(90)"/><rect x="-1.3" y="-6.3" width="2.6" height="3" transform="rotate(135)"/><rect x="-1.3" y="-6.3" width="2.6" height="3" transform="rotate(180)"/><rect x="-1.3" y="-6.3" width="2.6" height="3" transform="rotate(225)"/><rect x="-1.3" y="-6.3" width="2.6" height="3" transform="rotate(270)"/><rect x="-1.3" y="-6.3" width="2.6" height="3" transform="rotate(315)"/></g><circle r="1.8" fill="#3fb4e3"/></svg>
<div class="t" style="left:54px;top:8.3px;font-size:13.5px;font-weight:700;color:#0c0c0c;letter-spacing:1px">Settings</div>
<svg style="left:368px;top:10px" width="12" height="12" viewBox="0 0 12 12"><circle cx="6" cy="6" r="6" fill="#c9c9c9"/><path d="M3.8 3.8l4.4 4.4M8.2 3.8L3.8 8.2" stroke="#fff" stroke-width="1.6"/></svg>
<div class="t" style="left:59px;top:57.2px;font-size:12px;color:#515a63;letter-spacing:.25px">Overlay Active Jobs</div>
<div class="abs" style="left:312px;top:60px;width:31px;height:16px;border-radius:8px;background:#3ebd51"></div><div class="abs" style="left:327px;top:60px;width:16px;height:16px;border-radius:8px;background:#fff;box-shadow:0 0 1.5px rgba(0,0,0,.35)"></div>
<div class="abs" style="left:48px;top:89px;width:326px;height:51px;border:2px solid #e3424a;border-radius:2px"></div>
<div class="t" style="left:59px;top:104.2px;font-size:12px;color:#515a63;letter-spacing:.2px">Overlay Service Territory</div>
<div class="abs" style="left:312px;top:107px;width:31px;height:16px;border-radius:8px;background:#3ebd51"></div><div class="abs" style="left:327px;top:107px;width:16px;height:16px;border-radius:8px;background:#fff;box-shadow:0 0 1.5px rgba(0,0,0,.35)"></div>
</div>
<div id="legend" class="abs">
<div class="t" style="left:8px;top:6px;font-size:14.3px;font-weight:700;color:#4a5661;letter-spacing:.12px">Service Territory Legend</div>
<div class="abs" style="left:20px;top:33.5px;width:18px;height:9px;border:2px solid #4b5ea8;background:#cfd4e7"></div>
<div class="t" style="left:43px;top:32.5px;font-size:11px;color:#555b61;letter-spacing:.5px">London</div>
</div>
<div id="zoom" class="abs">
<div class="abs" style="left:0;top:20px;width:23px;height:1px;background:#ccc"></div>
<svg style="left:6px;top:4px" width="11" height="11"><path d="M5.5 1v9M1 5.5h9" stroke="#111" stroke-width="2"/></svg>
<svg style="left:6px;top:26px" width="11" height="11"><path d="M1 5.5h9" stroke="#111" stroke-width="2"/></svg>
</div>
</body></html>
